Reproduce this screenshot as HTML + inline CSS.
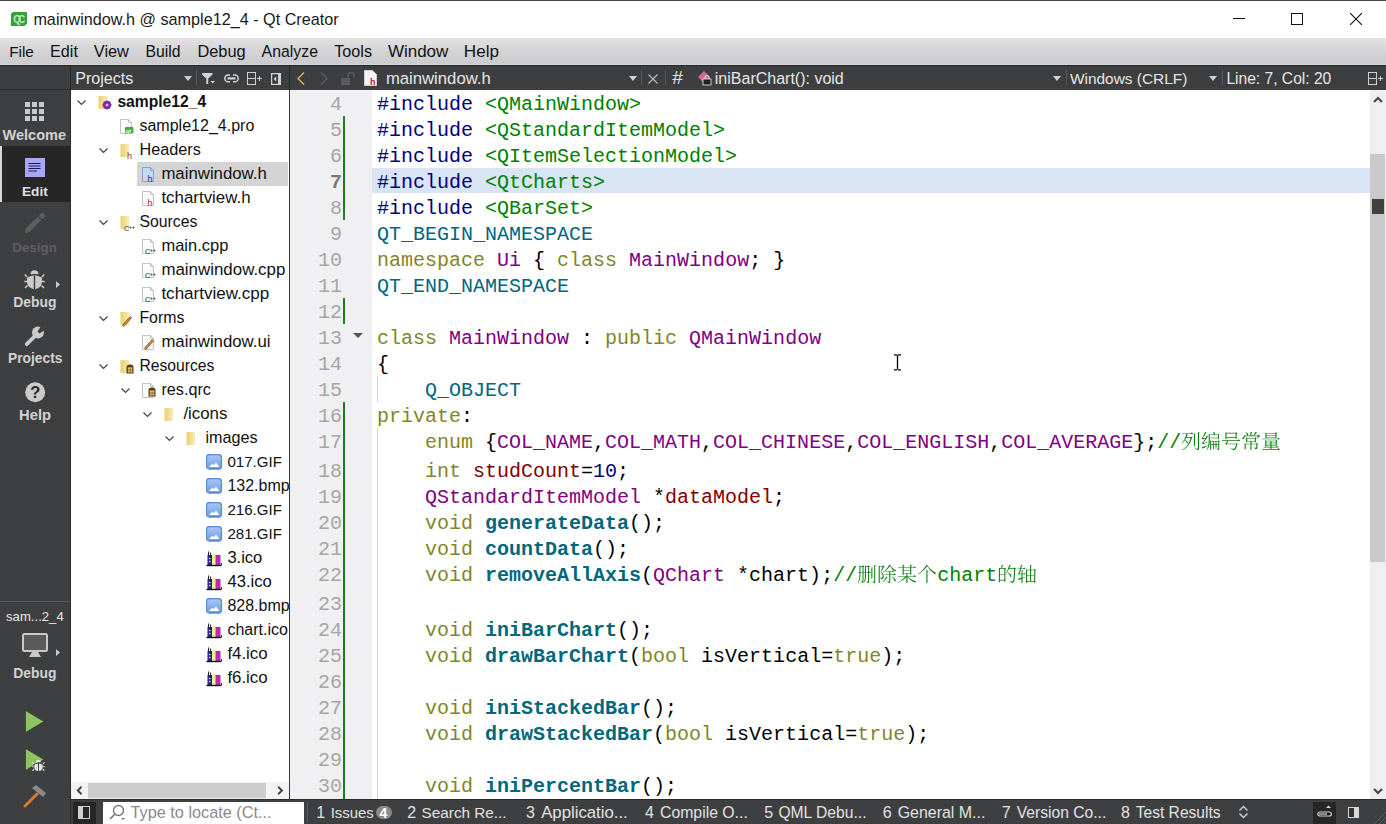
<!DOCTYPE html><html><head><meta charset='utf-8'><style>
*{margin:0;padding:0;box-sizing:border-box}
html,body{width:1386px;height:824px;overflow:hidden;background:#fff;font-family:"Liberation Sans", sans-serif;}
.a{position:absolute}
.t{position:absolute;white-space:pre;line-height:1}
.code{position:absolute;white-space:pre;font-family:"Liberation Mono", monospace;font-size:20px;line-height:26px;color:#000}
.kw{color:#84842a} .ty{color:#800080} .mac{color:#00677c} .pp{color:#000080} .str{color:#008000}
.fn{color:#00677c;font-weight:bold} .mem{color:#800000} .num{color:#000080} .cm{color:#008000}
.ln{position:absolute;font-family:"Liberation Mono", monospace;font-size:20px;line-height:26px;color:#9f9f9f;text-align:right;width:60px;left:280px}
</style></head><body>
<div class='a' style='left:0;top:0;width:1386px;height:1px;background:#474747'></div>
<div class='a' style='left:0;top:1px;width:1386px;height:37px;background:#fff'></div>
<svg class='a' style='left:11px;top:12px' width='17' height='14' viewBox='0 0 17 14'>
<path d='M2 0H16V11.5L13.5 14H0V2Z' fill='#35a03e'/>
<text x='8.2' y='11.3' font-family='Liberation Sans' font-size='10' font-weight='bold' fill='#b8f0b0' text-anchor='middle' textLength='12'>QC</text></svg>
<div class='t' style='left:33.40px;top:11px;font-family:"Liberation Sans";font-size:16.2px;font-weight:400;color:#1a1a1a;'>mainwindow.h @ sample12_4 - Qt Creator</div>
<div class='a' style='left:1233px;top:18px;width:12px;height:1px;background:#111'></div>
<div class='a' style='left:1291px;top:13px;width:12px;height:12px;border:1px solid #111'></div>
<svg class='a' style='left:1350px;top:13px' width='12' height='12' viewBox='0 0 12 12'><path d='M0 0L12 12M12 0L0 12' stroke='#111' stroke-width='1.1'/></svg>
<div class='a' style='left:0;top:38px;width:1386px;height:27px;background:linear-gradient(#e2e2e3,#d3d3d5 50%,#cbcbcd)'></div>
<div class='a' style='left:0;top:64px;width:1386px;height:1px;background:#d6d6d8'></div>
<div class='t' style='left:9.15px;top:44px;font-family:"Liberation Sans";font-size:15.3px;font-weight:400;color:#111;'>File</div>
<div class='t' style='left:50.10px;top:43px;font-family:"Liberation Sans";font-size:16.15px;font-weight:400;color:#111;'>Edit</div>
<div class='t' style='left:93.80px;top:43px;font-family:"Liberation Sans";font-size:16.35px;font-weight:400;color:#111;'>View</div>
<div class='t' style='left:145.40px;top:44px;font-family:"Liberation Sans";font-size:15.75px;font-weight:400;color:#111;'>Build</div>
<div class='t' style='left:197.40px;top:43px;font-family:"Liberation Sans";font-size:16.4px;font-weight:400;color:#111;'>Debug</div>
<div class='t' style='left:261.60px;top:44px;font-family:"Liberation Sans";font-size:15.85px;font-weight:400;color:#111;'>Analyze</div>
<div class='t' style='left:334.20px;top:43px;font-family:"Liberation Sans";font-size:16.2px;font-weight:400;color:#111;'>Tools</div>
<div class='t' style='left:387.90px;top:43px;font-family:"Liberation Sans";font-size:17.0px;font-weight:400;color:#111;'>Window</div>
<div class='t' style='left:463.80px;top:43px;font-family:"Liberation Sans";font-size:17.1px;font-weight:400;color:#111;'>Help</div>
<div class='a' style='left:0;top:65px;width:1386px;height:25px;background:#3d3e40'></div>
<div class='a' style='left:0;top:65px;width:1386px;height:1px;background:#26272a'></div>
<div class='a' style='left:0;top:89px;width:71px;height:1px;background:#2c2c2e'></div>
<div class='a' style='left:70px;top:65px;width:1px;height:25px;background:#2c2c2e'></div>
<div class='t' style='left:75.20px;top:70px;font-family:"Liberation Sans";font-size:16.1px;font-weight:400;color:#e6e6e6;'>Projects</div>
<svg class='a' style='left:184px;top:76px' width='8' height='5'><path d='M0 0H8L4 5Z' fill='#cfcfcf'/></svg>
<div class='a' style='left:196px;top:70px;width:1px;height:15px;background:#5a5a5a'></div>
<svg class='a' style='left:202px;top:73px' width='14' height='12' viewBox='0 0 14 12'>
<path d='M0 0H10.5V1.5L6.2 5.5V11L4.3 11V5.5L0 1.5Z' fill='#d4d4d4'/><path d='M8.5 8H13L10.75 10.5Z' fill='#d4d4d4'/></svg>
<svg class='a' style='left:224px;top:74px' width='15' height='9' viewBox='0 0 15 9'>
<path d='M6 1H4.2A3.3 3.3 0 0 0 4.2 7.8H6M9 1H10.8A3.3 3.3 0 0 1 10.8 7.8H9' fill='none' stroke='#d4d4d4' stroke-width='1.5'/>
<path d='M3.5 4.4H11.5' stroke='#d4d4d4' stroke-width='2.2'/></svg>
<svg class='a' style='left:247px;top:72px' width='16' height='14' viewBox='0 0 16 14'>
<rect x='0.5' y='0.5' width='8' height='12' fill='none' stroke='#d0d0d0'/><path d='M0.5 6.5H8.5' stroke='#d0d0d0'/>
<path d='M10 6.5H15M12.5 4V9' stroke='#d0d0d0'/></svg>
<svg class='a' style='left:271px;top:73px' width='10' height='12' viewBox='0 0 10 12'>
<rect x='0.6' y='0.6' width='8' height='10.8' fill='none' stroke='#d4d4d4' stroke-width='1.2'/><rect x='7' y='0' width='3' height='12' fill='#d4d4d4'/><path d='M5.2 3.5V8.5L2.7 6Z' fill='#d4d4d4'/></svg>
<div class='a' style='left:289px;top:65px;width:1px;height:25px;background:#262626'></div>
<svg class='a' style='left:297px;top:72px' width='8' height='13' viewBox='0 0 8 13'><path d='M7 0.5L1 6.5L7 12.5' fill='none' stroke='#d7b94a' stroke-width='1.4'/></svg>
<svg class='a' style='left:320px;top:72px' width='8' height='13' viewBox='0 0 8 13'><path d='M1 0.5L7 6.5L1 12.5' fill='none' stroke='#5e5e5e' stroke-width='1.4'/></svg>
<svg class='a' style='left:341px;top:72px' width='14' height='13' viewBox='0 0 14 13'>
<rect x='0' y='6' width='9' height='7' fill='#5a5a5a'/><path d='M7 6V3.5A3 3 0 0 1 13 3.5V5' fill='none' stroke='#5a5a5a' stroke-width='1.5'/></svg>
<svg class='a' style='left:364px;top:70px' width='13' height='16' viewBox='0 0 13 16'>
<path d='M0.5 0.5H8.5L12.5 4.5V15.5H0.5Z' fill='#f4f4f4' stroke='#cfcfcf'/>
<text x='6' y='15' font-family='Liberation Sans' font-size='9' font-weight='bold' fill='#c0203a'>h</text></svg>
<div class='t' style='left:385.90px;top:71px;font-family:"Liberation Sans";font-size:16.7px;font-weight:400;color:#e6e6e6;'>mainwindow.h</div>
<svg class='a' style='left:629px;top:76px' width='8' height='5'><path d='M0 0H8L4 5Z' fill='#cfcfcf'/></svg>
<div class='a' style='left:641px;top:70px;width:1px;height:15px;background:#5a5a5a'></div>
<svg class='a' style='left:648px;top:74px' width='10' height='10' viewBox='0 0 10 10'><path d='M0.5 0.5L9.5 9.5M9.5 0.5L0.5 9.5' stroke='#bdbdbd' stroke-width='1.1'/></svg>
<div class='a' style='left:665px;top:70px;width:1px;height:15px;background:#5a5a5a'></div>
<div class='t' style='left:672.20px;top:68px;font-family:"Liberation Sans";font-size:19.2px;font-weight:400;color:#e6e6e6;'>#</div>
<svg class='a' style='left:697px;top:70px' width='16' height='16' viewBox='0 0 16 16'>
<path d='M7 1L13 7L7 13L1 7Z' fill='#d06a90'/><rect x='6' y='9' width='8' height='6' fill='#222' stroke='#eee' stroke-width='0.8'/>
<path d='M8 9V7.5A2 2 0 0 1 12 7.5V9' fill='none' stroke='#eee' stroke-width='1'/></svg>
<div class='t' style='left:714.80px;top:71px;font-family:"Liberation Sans";font-size:16.0px;font-weight:400;color:#e6e6e6;'>iniBarChart(): void</div>
<svg class='a' style='left:1053px;top:76px' width='8' height='5'><path d='M0 0H8L4 5Z' fill='#cfcfcf'/></svg>
<div class='a' style='left:1066px;top:70px;width:1px;height:15px;background:#5a5a5a'></div>
<div class='t' style='left:1069.90px;top:71px;font-family:"Liberation Sans";font-size:15.45px;font-weight:400;color:#e6e6e6;'>Windows (CRLF)</div>
<svg class='a' style='left:1209px;top:76px' width='8' height='5'><path d='M0 0H8L4 5Z' fill='#cfcfcf'/></svg>
<div class='a' style='left:1222px;top:70px;width:1px;height:15px;background:#5a5a5a'></div>
<div class='t' style='left:1226.40px;top:71px;font-family:"Liberation Sans";font-size:15.6px;font-weight:400;color:#e6e6e6;'>Line: 7, Col: 20</div>
<svg class='a' style='left:1368px;top:72px' width='16' height='14' viewBox='0 0 16 14'>
<rect x='0.5' y='0.5' width='8' height='12' fill='none' stroke='#d0d0d0'/><path d='M0.5 6.5H8.5' stroke='#d0d0d0'/>
<path d='M10 6.5H15M12.5 4V9' stroke='#d0d0d0'/></svg>
<div class='a' style='left:0;top:90px;width:71px;height:734px;background:#3e3f41'></div>
<div class='a' style='left:70px;top:90px;width:1px;height:734px;background:#2a2a2c'></div>
<svg class='a' style='left:25px;top:102px' width='20' height='20' viewBox='0 0 20 20'><rect x='0' y='0' width='5' height='5' fill='#c9c9c9'/><rect x='7' y='0' width='5' height='5' fill='#c9c9c9'/><rect x='14' y='0' width='5' height='5' fill='#c9c9c9'/><rect x='0' y='7' width='5' height='5' fill='#c9c9c9'/><rect x='7' y='7' width='5' height='5' fill='#c9c9c9'/><rect x='14' y='7' width='5' height='5' fill='#c9c9c9'/><rect x='0' y='14' width='5' height='5' fill='#c9c9c9'/><rect x='7' y='14' width='5' height='5' fill='#c9c9c9'/><rect x='14' y='14' width='5' height='5' fill='#c9c9c9'/></svg>
<div class='t' style='left:2.60px;top:128px;font-family:"Liberation Sans";font-size:14.5px;font-weight:700;color:#d2d2d2;'>Welcome</div>
<div class='a' style='left:0;top:146px;width:70px;height:56px;background:#262626'></div>
<div class='a' style='left:0;top:146px;width:2px;height:56px;background:#d8d8d8'></div>
<svg class='a' style='left:25px;top:158px' width='20' height='19' viewBox='0 0 20 19'>
<rect x='0' y='0' width='20' height='19' fill='#a8a8f0'/><path d='M3.5 5.5H15.5M3.5 8H15.5M3.5 10.5H15.5M3.5 13H12' stroke='#1a1a60' stroke-width='1.1'/></svg>
<div class='t' style='left:22.00px;top:185px;font-family:"Liberation Sans";font-size:13.65px;font-weight:700;color:#e0e0e0;'>Edit</div>
<svg class='a' style='left:24px;top:213px' width='21' height='21' viewBox='0 0 21 21'>
<g transform='translate(10.5,10.5) rotate(-45)'><path d='M-14 0L-9.5 -2.4H7V2.4H-9.5Z' fill='#5e5e5e'/><rect x='8.3' y='-2.4' width='5.2' height='4.8' fill='#5e5e5e'/></g></svg>
<div class='t' style='left:12.20px;top:241px;font-family:"Liberation Sans";font-size:13.45px;font-weight:700;color:#5e5e5e;'>Design</div>
<svg class='a' style='left:24px;top:269px' width='21' height='21' viewBox='0 0 21 21'>
<path d='M6.5 5.2A4 4 0 0 1 14.5 5.2Z' fill='#cacaca'/>
<path d='M3 8.5Q10.5 4 18 8.5V13A7.5 7.2 0 0 1 3 13Z' fill='#cacaca'/>
<path d='M10.5 6.5V20.5' stroke='#3e3f41' stroke-width='1.4'/><path d='M2.5 8L10.5 5.3L18.5 8' fill='none' stroke='#3e3f41' stroke-width='1'/>
<path d='M0.8 5.5L3 8M0.3 12.5H3M1 19L3.5 16.5M20.2 5.5L18 8M20.7 12.5H18M20 19L17.5 16.5' stroke='#cacaca' stroke-width='1.5'/></svg>
<svg class='a' style='left:56px;top:281px' width='4' height='7'><path d='M0 0L4 3.5L0 7Z' fill='#cacaca'/></svg>
<div class='t' style='left:13.20px;top:296px;font-family:"Liberation Sans";font-size:13.9px;font-weight:700;color:#d2d2d2;'>Debug</div>
<svg class='a' style='left:24px;top:325px' width='21' height='22' viewBox='0 0 21 22'>
<path d='M2.8 19.2L11 11' stroke='#cacaca' stroke-width='3.8' stroke-linecap='round'/>
<circle cx='14' cy='7.5' r='6' fill='#cacaca'/><path d='M13.5 6.5L17.5 0.5L21.5 4.5L15.5 8.5Z' fill='#3e3f41'/></svg>
<div class='t' style='left:8.10px;top:352px;font-family:"Liberation Sans";font-size:13.75px;font-weight:700;color:#d2d2d2;'>Projects</div>
<svg class='a' style='left:25px;top:382px' width='21' height='21' viewBox='0 0 21 21'>
<circle cx='10.2' cy='10.2' r='10' fill='#cacaca'/>
<text x='10.2' y='16.2' font-family='Liberation Sans' font-size='16.5' font-weight='bold' fill='#2a2a2a' text-anchor='middle'>?</text></svg>
<div class='t' style='left:19.10px;top:408px;font-family:"Liberation Sans";font-size:14.75px;font-weight:700;color:#d2d2d2;'>Help</div>
<div class='a' style='left:0;top:601px;width:70px;height:1px;background:#5a5a5a'></div>
<div class='t' style='left:6.00px;top:610px;font-family:"Liberation Sans";font-size:13.15px;font-weight:400;color:#e8e8e8;'>sam...2_4</div>
<svg class='a' style='left:22px;top:633px' width='26' height='25' viewBox='0 0 26 25'>
<rect x='1' y='1' width='24' height='17' rx='1.5' fill='#5a5a5a' stroke='#c8c8c8' stroke-width='2'/>
<path d='M10 19H16L19 24H7Z' fill='#c8c8c8'/></svg>
<svg class='a' style='left:56px;top:649px' width='4' height='7'><path d='M0 0L4 3.5L0 7Z' fill='#cacaca'/></svg>
<div class='t' style='left:13.20px;top:667px;font-family:"Liberation Sans";font-size:13.9px;font-weight:700;color:#d2d2d2;'>Debug</div>
<svg class='a' style='left:25px;top:710px' width='20' height='23' viewBox='0 0 20 23'>
<path d='M0.5 0.5L19 11.5L0.5 22.5Z' fill='#8fc263' stroke='#2e4a20' stroke-width='0.8'/></svg>
<svg class='a' style='left:25px;top:748px' width='21' height='23' viewBox='0 0 21 23'>
<path d='M0.5 0.5L19 11.5L0.5 22.5Z' fill='#8fc263' stroke='#2e4a20' stroke-width='0.8'/>
<g transform='translate(7,11) scale(0.62)'><path d='M6.5 5.2A4 4 0 0 1 14.5 5.2Z' fill='#e4e4e4'/><path d='M3 8.5Q10.5 4 18 8.5V13A7.5 7.2 0 0 1 3 13Z' fill='#e4e4e4' stroke='#3e3f41' stroke-width='1.5'/><path d='M10.5 6.5V20.5' stroke='#3e3f41' stroke-width='1.6'/><path d='M0.8 5.5L3 8M0.3 12.5H3M1 19L3.5 16.5M20.2 5.5L18 8M20.7 12.5H18M20 19L17.5 16.5' stroke='#e4e4e4' stroke-width='2'/></g></svg>
<svg class='a' style='left:23px;top:785px' width='24' height='23' viewBox='0 0 24 23'>
<path d='M2 21L14 9' stroke='#d47c2c' stroke-width='3' stroke-linecap='round'/>
<path d='M9 3L13 0L23 8L20 12Z' fill='#8a8a8a'/></svg>
<div class='a' style='left:71px;top:90px;width:218px;height:709px;background:#fff'></div>
<svg width='0' height='0' style='position:absolute'><defs><linearGradient id='fg' x1='0' x2='1'><stop offset='0' stop-color='#ead071'/><stop offset='1' stop-color='#f8ebbb'/></linearGradient><linearGradient id='ig' x1='0' y1='0' x2='0' y2='1'><stop offset='0' stop-color='#a9c7f4'/><stop offset='1' stop-color='#6e9de6'/></linearGradient></defs></svg>
<div class='a' style='left:137px;top:162px;width:151px;height:24px;background:#d4d4d4'></div>
<div class='a' style='left:71px;top:90px;width:218px;height:692px;overflow:hidden'>
<svg class='a' style='left:6px;top:10px' width='9' height='6'><path d='M0.5 0.5L4.5 4.5L8.5 0.5' fill='none' stroke='#444' stroke-width='1.2'/></svg>
<svg class='a' style='left:27px;top:6px' width='16' height='16' viewBox='0 0 16 16'><rect x='0.5' y='0' width='8.5' height='13' fill='url(#fg)'/><circle cx='9' cy='9' r='3.2' fill='none' stroke='#7a2aa8' stroke-width='2'/><path d='M9 4.5V13.5M4.5 9H13.5M5.8 5.8L12.2 12.2M12.2 5.8L5.8 12.2' stroke='#7a2aa8' stroke-width='1.3'/><circle cx='9' cy='9' r='1.3' fill='#e0c0f0'/></svg>
<div class='t' style='left:46.40px;top:4px;font-family:"Liberation Sans";font-size:15.65px;font-weight:700;color:#111;'>sample12_4</div>
<svg class='a' style='left:49px;top:29px' width='14' height='16' viewBox='0 0 14 16'><path d='M0.5 0.5H8.5L11.5 3.5V14.5H0.5Z' fill='#fcfcfc' stroke='#c2c2c2'/><path d='M8.5 0.5V3.5H11.5' fill='none' stroke='#c2c2c2'/><rect x='5' y='8' width='8.5' height='6.5' rx='1' fill='#45a849'/><text x='5.6' y='13.6' font-family='Liberation Sans' font-weight='bold' font-size='6' fill='#e8ffe0'>qt</text></svg>
<div class='t' style='left:68.40px;top:27px;font-family:"Liberation Sans";font-size:16.05px;font-weight:400;color:#111;'>sample12_4.pro</div>
<svg class='a' style='left:28px;top:58px' width='9' height='6'><path d='M0.5 0.5L4.5 4.5L8.5 0.5' fill='none' stroke='#444' stroke-width='1.2'/></svg>
<svg class='a' style='left:49px;top:54px' width='16' height='16' viewBox='0 0 16 16'><rect x='0.5' y='0' width='8.5' height='13' fill='url(#fg)'/><text x='7' y='14.5' font-family='Liberation Sans' font-size='9' fill='#b01c3a'>h</text></svg>
<div class='t' style='left:68.40px;top:51px;font-family:"Liberation Sans";font-size:16.25px;font-weight:400;color:#111;'>Headers</div>
<svg class='a' style='left:71px;top:77px' width='14' height='16' viewBox='0 0 14 16'><path d='M0.5 0.5H8.5L11.5 3.5V14.5H0.5Z' fill='#c4d9f5' stroke='#7fa3d6'/><path d='M8.5 0.5V3.5H11.5' fill='none' stroke='#7fa3d6'/><text x='5.5' y='14.5' font-family='Liberation Sans' font-size='9' fill='#3a2a7a'>h</text></svg>
<div class='t' style='left:90.40px;top:76px;font-family:"Liberation Sans";font-size:16.8px;font-weight:400;color:#111;'>mainwindow.h</div>
<svg class='a' style='left:71px;top:101px' width='14' height='16' viewBox='0 0 14 16'><path d='M0.5 0.5H8.5L11.5 3.5V14.5H0.5Z' fill='#fcfcfc' stroke='#c2c2c2'/><path d='M8.5 0.5V3.5H11.5' fill='none' stroke='#c2c2c2'/><text x='5.5' y='14.5' font-family='Liberation Sans' font-size='9' fill='#b01c3a'>h</text></svg>
<div class='t' style='left:90.40px;top:100px;font-family:"Liberation Sans";font-size:16.9px;font-weight:400;color:#111;'>tchartview.h</div>
<svg class='a' style='left:28px;top:130px' width='9' height='6'><path d='M0.5 0.5L4.5 4.5L8.5 0.5' fill='none' stroke='#444' stroke-width='1.2'/></svg>
<svg class='a' style='left:49px;top:126px' width='16' height='16' viewBox='0 0 16 16'><rect x='0.5' y='0' width='8.5' height='13' fill='url(#fg)'/><text x='4' y='14.5' font-family='Liberation Sans' font-size='7.5' fill='#334'>C</text><text x='9' y='13' font-family='Liberation Sans' font-size='5' font-weight='bold' fill='#334'>++</text></svg>
<div class='t' style='left:68.40px;top:124px;font-family:"Liberation Sans";font-size:15.8px;font-weight:400;color:#111;'>Sources</div>
<svg class='a' style='left:71px;top:149px' width='14' height='16' viewBox='0 0 14 16'><path d='M0.5 0.5H8.5L11.5 3.5V14.5H0.5Z' fill='#fcfcfc' stroke='#c2c2c2'/><path d='M8.5 0.5V3.5H11.5' fill='none' stroke='#c2c2c2'/><text x='3' y='14.5' font-family='Liberation Sans' font-size='7.5' fill='#334'>C</text><text x='8' y='13' font-family='Liberation Sans' font-size='5' font-weight='bold' fill='#334'>++</text></svg>
<div class='t' style='left:90.40px;top:147px;font-family:"Liberation Sans";font-size:16.5px;font-weight:400;color:#111;'>main.cpp</div>
<svg class='a' style='left:71px;top:173px' width='14' height='16' viewBox='0 0 14 16'><path d='M0.5 0.5H8.5L11.5 3.5V14.5H0.5Z' fill='#fcfcfc' stroke='#c2c2c2'/><path d='M8.5 0.5V3.5H11.5' fill='none' stroke='#c2c2c2'/><text x='3' y='14.5' font-family='Liberation Sans' font-size='7.5' fill='#334'>C</text><text x='8' y='13' font-family='Liberation Sans' font-size='5' font-weight='bold' fill='#334'>++</text></svg>
<div class='t' style='left:90.40px;top:172px;font-family:"Liberation Sans";font-size:16.9px;font-weight:400;color:#111;'>mainwindow.cpp</div>
<svg class='a' style='left:71px;top:197px' width='14' height='16' viewBox='0 0 14 16'><path d='M0.5 0.5H8.5L11.5 3.5V14.5H0.5Z' fill='#fcfcfc' stroke='#c2c2c2'/><path d='M8.5 0.5V3.5H11.5' fill='none' stroke='#c2c2c2'/><text x='3' y='14.5' font-family='Liberation Sans' font-size='7.5' fill='#334'>C</text><text x='8' y='13' font-family='Liberation Sans' font-size='5' font-weight='bold' fill='#334'>++</text></svg>
<div class='t' style='left:90.40px;top:195px;font-family:"Liberation Sans";font-size:17.05px;font-weight:400;color:#111;'>tchartview.cpp</div>
<svg class='a' style='left:28px;top:226px' width='9' height='6'><path d='M0.5 0.5L4.5 4.5L8.5 0.5' fill='none' stroke='#444' stroke-width='1.2'/></svg>
<svg class='a' style='left:49px;top:222px' width='16' height='16' viewBox='0 0 16 16'><rect x='0.5' y='0' width='8.5' height='13' fill='url(#fg)'/><path d='M3 14L11 5' stroke='#6a3a10' stroke-width='2.6'/><path d='M3 14L11 5' stroke='#e0923a' stroke-width='1.3'/></svg>
<div class='t' style='left:68.40px;top:220px;font-family:"Liberation Sans";font-size:15.9px;font-weight:400;color:#111;'>Forms</div>
<svg class='a' style='left:71px;top:245px' width='14' height='16' viewBox='0 0 14 16'><path d='M0.5 0.5H8.5L11.5 3.5V14.5H0.5Z' fill='#fcfcfc' stroke='#c2c2c2'/><path d='M8.5 0.5V3.5H11.5' fill='none' stroke='#c2c2c2'/><path d='M3 14L11 5' stroke='#6a3a10' stroke-width='2.6'/><path d='M3 14L11 5' stroke='#e0923a' stroke-width='1.3'/></svg>
<div class='t' style='left:90.40px;top:244px;font-family:"Liberation Sans";font-size:16.8px;font-weight:400;color:#111;'>mainwindow.ui</div>
<svg class='a' style='left:28px;top:274px' width='9' height='6'><path d='M0.5 0.5L4.5 4.5L8.5 0.5' fill='none' stroke='#444' stroke-width='1.2'/></svg>
<svg class='a' style='left:49px;top:270px' width='16' height='16' viewBox='0 0 16 16'><rect x='0.5' y='0' width='8.5' height='13' fill='url(#fg)'/><path d='M6.5 7A3.5 2.5 0 0 1 13.5 7V13.5H6.5Z' fill='#5e3c08'/><rect x='7.8' y='7.3' width='2' height='2.4' fill='#e6c27a'/><rect x='10.3' y='7.3' width='2' height='2.4' fill='#e6c27a'/><rect x='7.8' y='10.3' width='2' height='2.2' fill='#e6c27a'/><rect x='10.3' y='10.3' width='2' height='2.2' fill='#e6c27a'/></svg>
<div class='t' style='left:68.40px;top:268px;font-family:"Liberation Sans";font-size:15.7px;font-weight:400;color:#111;'>Resources</div>
<svg class='a' style='left:50px;top:298px' width='9' height='6'><path d='M0.5 0.5L4.5 4.5L8.5 0.5' fill='none' stroke='#444' stroke-width='1.2'/></svg>
<svg class='a' style='left:71px;top:293px' width='14' height='16' viewBox='0 0 14 16'><path d='M0.5 0.5H8.5L11.5 3.5V14.5H0.5Z' fill='#fcfcfc' stroke='#c2c2c2'/><path d='M8.5 0.5V3.5H11.5' fill='none' stroke='#c2c2c2'/><path d='M6.5 7A3.5 2.5 0 0 1 13.5 7V13.5H6.5Z' fill='#5e3c08'/><rect x='7.8' y='7.3' width='2' height='2.4' fill='#e6c27a'/><rect x='10.3' y='7.3' width='2' height='2.4' fill='#e6c27a'/><rect x='7.8' y='10.3' width='2' height='2.2' fill='#e6c27a'/><rect x='10.3' y='10.3' width='2' height='2.2' fill='#e6c27a'/></svg>
<div class='t' style='left:90.40px;top:291px;font-family:"Liberation Sans";font-size:16.2px;font-weight:400;color:#111;'>res.qrc</div>
<svg class='a' style='left:72px;top:322px' width='9' height='6'><path d='M0.5 0.5L4.5 4.5L8.5 0.5' fill='none' stroke='#444' stroke-width='1.2'/></svg>
<svg class='a' style='left:93px;top:318px' width='16' height='16' viewBox='0 0 16 16'><rect x='0.5' y='0' width='8.5' height='13' fill='url(#fg)'/></svg>
<div class='t' style='left:112.40px;top:316px;font-family:"Liberation Sans";font-size:16.85px;font-weight:400;color:#111;'>/icons</div>
<svg class='a' style='left:94px;top:346px' width='9' height='6'><path d='M0.5 0.5L4.5 4.5L8.5 0.5' fill='none' stroke='#444' stroke-width='1.2'/></svg>
<svg class='a' style='left:115px;top:342px' width='16' height='16' viewBox='0 0 16 16'><rect x='0.5' y='0' width='8.5' height='13' fill='url(#fg)'/></svg>
<div class='t' style='left:134.40px;top:339px;font-family:"Liberation Sans";font-size:16.2px;font-weight:400;color:#111;'>images</div>
<svg class='a' style='left:135px;top:364px' width='17' height='16' viewBox='0 0 17 16'><rect x='0.5' y='0.5' width='15' height='14.5' rx='3' fill='url(#ig)' stroke='#5a8ad8' stroke-width='1.3'/><path d='M3 13L6 10L8 11L10 8.5L13.5 13Z' fill='#fff'/></svg>
<div class='t' style='left:156.40px;top:364px;font-family:"Liberation Sans";font-size:15.1px;font-weight:400;color:#111;'>017.GIF</div>
<svg class='a' style='left:135px;top:388px' width='17' height='16' viewBox='0 0 17 16'><rect x='0.5' y='0.5' width='15' height='14.5' rx='3' fill='url(#ig)' stroke='#5a8ad8' stroke-width='1.3'/><path d='M3 13L6 10L8 11L10 8.5L13.5 13Z' fill='#fff'/></svg>
<div class='t' style='left:156.40px;top:388px;font-family:"Liberation Sans";font-size:16.0px;font-weight:400;color:#111;'>132.bmp</div>
<svg class='a' style='left:135px;top:412px' width='17' height='16' viewBox='0 0 17 16'><rect x='0.5' y='0.5' width='15' height='14.5' rx='3' fill='url(#ig)' stroke='#5a8ad8' stroke-width='1.3'/><path d='M3 13L6 10L8 11L10 8.5L13.5 13Z' fill='#fff'/></svg>
<div class='t' style='left:156.40px;top:412px;font-family:"Liberation Sans";font-size:15.1px;font-weight:400;color:#111;'>216.GIF</div>
<svg class='a' style='left:135px;top:436px' width='17' height='16' viewBox='0 0 17 16'><rect x='0.5' y='0.5' width='15' height='14.5' rx='3' fill='url(#ig)' stroke='#5a8ad8' stroke-width='1.3'/><path d='M3 13L6 10L8 11L10 8.5L13.5 13Z' fill='#fff'/></svg>
<div class='t' style='left:156.40px;top:436px;font-family:"Liberation Sans";font-size:15.1px;font-weight:400;color:#111;'>281.GIF</div>
<svg class='a' style='left:135px;top:461px' width='17' height='16' viewBox='0 0 17 16'><rect x='1.5' y='4' width='4.5' height='10' fill='#22228a'/><rect x='6' y='3' width='3.5' height='11' fill='#f4eca0'/><rect x='9.5' y='4' width='5' height='10' fill='#b62ab0'/><path d='M0.5 14.5H15.5' stroke='#111' stroke-width='1.4'/><path d='M2.5 0.5V4M4.5 1.5V4M15.5 12V14' stroke='#111' stroke-width='0.9'/><circle cx='3.7' cy='7.5' r='0.8' fill='#fff'/><circle cx='3.7' cy='10.5' r='0.8' fill='#fff'/></svg>
<div class='t' style='left:156.40px;top:460px;font-family:"Liberation Sans";font-size:16.55px;font-weight:400;color:#111;'>3.ico</div>
<svg class='a' style='left:135px;top:485px' width='17' height='16' viewBox='0 0 17 16'><rect x='1.5' y='4' width='4.5' height='10' fill='#22228a'/><rect x='6' y='3' width='3.5' height='11' fill='#f4eca0'/><rect x='9.5' y='4' width='5' height='10' fill='#b62ab0'/><path d='M0.5 14.5H15.5' stroke='#111' stroke-width='1.4'/><path d='M2.5 0.5V4M4.5 1.5V4M15.5 12V14' stroke='#111' stroke-width='0.9'/><circle cx='3.7' cy='7.5' r='0.8' fill='#fff'/><circle cx='3.7' cy='10.5' r='0.8' fill='#fff'/></svg>
<div class='t' style='left:156.40px;top:484px;font-family:"Liberation Sans";font-size:16.65px;font-weight:400;color:#111;'>43.ico</div>
<svg class='a' style='left:135px;top:508px' width='17' height='16' viewBox='0 0 17 16'><rect x='0.5' y='0.5' width='15' height='14.5' rx='3' fill='url(#ig)' stroke='#5a8ad8' stroke-width='1.3'/><path d='M3 13L6 10L8 11L10 8.5L13.5 13Z' fill='#fff'/></svg>
<div class='t' style='left:156.40px;top:508px;font-family:"Liberation Sans";font-size:16.0px;font-weight:400;color:#111;'>828.bmp</div>
<svg class='a' style='left:135px;top:533px' width='17' height='16' viewBox='0 0 17 16'><rect x='1.5' y='4' width='4.5' height='10' fill='#22228a'/><rect x='6' y='3' width='3.5' height='11' fill='#f4eca0'/><rect x='9.5' y='4' width='5' height='10' fill='#b62ab0'/><path d='M0.5 14.5H15.5' stroke='#111' stroke-width='1.4'/><path d='M2.5 0.5V4M4.5 1.5V4M15.5 12V14' stroke='#111' stroke-width='0.9'/><circle cx='3.7' cy='7.5' r='0.8' fill='#fff'/><circle cx='3.7' cy='10.5' r='0.8' fill='#fff'/></svg>
<div class='t' style='left:156.40px;top:532px;font-family:"Liberation Sans";font-size:16.0px;font-weight:400;color:#111;'>chart.ico</div>
<svg class='a' style='left:135px;top:557px' width='17' height='16' viewBox='0 0 17 16'><rect x='1.5' y='4' width='4.5' height='10' fill='#22228a'/><rect x='6' y='3' width='3.5' height='11' fill='#f4eca0'/><rect x='9.5' y='4' width='5' height='10' fill='#b62ab0'/><path d='M0.5 14.5H15.5' stroke='#111' stroke-width='1.4'/><path d='M2.5 0.5V4M4.5 1.5V4M15.5 12V14' stroke='#111' stroke-width='0.9'/><circle cx='3.7' cy='7.5' r='0.8' fill='#fff'/><circle cx='3.7' cy='10.5' r='0.8' fill='#fff'/></svg>
<div class='t' style='left:156.40px;top:556px;font-family:"Liberation Sans";font-size:16.85px;font-weight:400;color:#111;'>f4.ico</div>
<svg class='a' style='left:135px;top:581px' width='17' height='16' viewBox='0 0 17 16'><rect x='1.5' y='4' width='4.5' height='10' fill='#22228a'/><rect x='6' y='3' width='3.5' height='11' fill='#f4eca0'/><rect x='9.5' y='4' width='5' height='10' fill='#b62ab0'/><path d='M0.5 14.5H15.5' stroke='#111' stroke-width='1.4'/><path d='M2.5 0.5V4M4.5 1.5V4M15.5 12V14' stroke='#111' stroke-width='0.9'/><circle cx='3.7' cy='7.5' r='0.8' fill='#fff'/><circle cx='3.7' cy='10.5' r='0.8' fill='#fff'/></svg>
<div class='t' style='left:156.40px;top:580px;font-family:"Liberation Sans";font-size:16.85px;font-weight:400;color:#111;'>f6.ico</div>
</div>
<div class='a' style='left:71px;top:782px;width:218px;height:17px;background:#f3f3f3'></div>
<div class='a' style='left:88px;top:783px;width:178px;height:15px;background:#cdcdcd'></div>
<svg class='a' style='left:76px;top:786px' width='7' height='9'><path d='M5.5 0.8L1.8 4.5L5.5 8.2' fill='none' stroke='#444' stroke-width='2'/></svg>
<svg class='a' style='left:277px;top:786px' width='7' height='9'><path d='M1.2 0.8L4.9 4.5L1.2 8.2' fill='none' stroke='#444' stroke-width='2'/></svg>
<div class='a' style='left:289px;top:90px;width:1px;height:710px;background:#3a3a3a'></div>
<div class='a' style='left:290px;top:90px;width:1096px;height:710px;background:#fff'></div>
<div class='a' style='left:290px;top:90px;width:82px;height:710px;background:#f0eff1'></div>
<div class='a' style='left:372px;top:168px;width:998px;height:25px;background:#d9e5f5'></div>
<div class='a' style='left:290px;top:90px;width:1080px;height:710px;overflow:hidden'>
<div class='code' style='left:87px;top:2px;height:26px'><span class='pp'>#include</span> <span class='str'>&lt;QMainWindow&gt;</span></div>
<div class='ln' style='left:0px;top:2px;width:52px;font-weight:normal;color:#a6a6a6'>4</div>
<div class='code' style='left:87px;top:28px;height:26px'><span class='pp'>#include</span> <span class='str'>&lt;QStandardItemModel&gt;</span></div>
<div class='ln' style='left:0px;top:28px;width:52px;font-weight:normal;color:#a6a6a6'>5</div>
<div class='code' style='left:87px;top:54px;height:26px'><span class='pp'>#include</span> <span class='str'>&lt;QItemSelectionModel&gt;</span></div>
<div class='ln' style='left:0px;top:54px;width:52px;font-weight:normal;color:#a6a6a6'>6</div>
<div class='code' style='left:87px;top:80px;height:26px'><span class='pp'>#include</span> <span class='str'>&lt;QtCharts&gt;</span></div>
<div class='ln' style='left:0px;top:80px;width:52px;font-weight:bold;color:#7a7a7a'>7</div>
<div class='code' style='left:87px;top:106px;height:26px'><span class='pp'>#include</span> <span class='str'>&lt;QBarSet&gt;</span></div>
<div class='ln' style='left:0px;top:106px;width:52px;font-weight:normal;color:#a6a6a6'>8</div>
<div class='code' style='left:87px;top:132px;height:26px'><span class='mac'>QT_BEGIN_NAMESPACE</span></div>
<div class='ln' style='left:0px;top:132px;width:52px;font-weight:normal;color:#a6a6a6'>9</div>
<div class='code' style='left:87px;top:158px;height:26px'><span class='kw'>namespace</span> <span class='ty'>Ui</span> { <span class='kw'>class</span> <span class='ty'>MainWindow</span>; }</div>
<div class='ln' style='left:0px;top:158px;width:52px;font-weight:normal;color:#a6a6a6'>10</div>
<div class='code' style='left:87px;top:184px;height:26px'><span class='mac'>QT_END_NAMESPACE</span></div>
<div class='ln' style='left:0px;top:184px;width:52px;font-weight:normal;color:#a6a6a6'>11</div>
<div class='code' style='left:87px;top:210px;height:26px'></div>
<div class='ln' style='left:0px;top:210px;width:52px;font-weight:normal;color:#a6a6a6'>12</div>
<div class='code' style='left:87px;top:236px;height:26px'><span class='kw'>class</span> <span class='ty'>MainWindow</span> : <span class='kw'>public</span> <span class='ty'>QMainWindow</span></div>
<div class='ln' style='left:0px;top:236px;width:52px;font-weight:normal;color:#a6a6a6'>13</div>
<div class='code' style='left:87px;top:262px;height:26px'>{</div>
<div class='ln' style='left:0px;top:262px;width:52px;font-weight:normal;color:#a6a6a6'>14</div>
<div class='code' style='left:87px;top:288px;height:26px'>    <span class='mac'>Q_OBJECT</span></div>
<div class='ln' style='left:0px;top:288px;width:52px;font-weight:normal;color:#a6a6a6'>15</div>
<div class='code' style='left:87px;top:314px;height:26px'><span class='kw'>private</span>:</div>
<div class='ln' style='left:0px;top:314px;width:52px;font-weight:normal;color:#a6a6a6'>16</div>
<div class='code' style='left:87px;top:340px;height:26px'>    <span class='kw'>enum</span> {<span class='ty'>COL_NAME</span>,<span class='ty'>COL_MATH</span>,<span class='ty'>COL_CHINESE</span>,<span class='ty'>COL_ENGLISH</span>,<span class='ty'>COL_AVERAGE</span>};<span class='cm'>//</span><span style='display:inline-block;width:100px;height:1px'></span></div>
<div class='ln' style='left:0px;top:340px;width:52px;font-weight:normal;color:#a6a6a6'>17</div>
<div class='code' style='left:87px;top:369px;height:26px'>    <span class='kw'>int</span> <span class='mem'>studCount</span>=<span class='num'>10</span>;</div>
<div class='ln' style='left:0px;top:369px;width:52px;font-weight:normal;color:#a6a6a6'>18</div>
<div class='code' style='left:87px;top:395px;height:26px'>    <span class='ty'>QStandardItemModel</span> *<span class='mem'>dataModel</span>;</div>
<div class='ln' style='left:0px;top:395px;width:52px;font-weight:normal;color:#a6a6a6'>19</div>
<div class='code' style='left:87px;top:421px;height:26px'>    <span class='kw'>void</span> <span class='fn'>generateData</span>();</div>
<div class='ln' style='left:0px;top:421px;width:52px;font-weight:normal;color:#a6a6a6'>20</div>
<div class='code' style='left:87px;top:447px;height:26px'>    <span class='kw'>void</span> <span class='fn'>countData</span>();</div>
<div class='ln' style='left:0px;top:447px;width:52px;font-weight:normal;color:#a6a6a6'>21</div>
<div class='code' style='left:87px;top:473px;height:26px'>    <span class='kw'>void</span> <span class='fn'>removeAllAxis</span>(<span class='ty'>QChart</span> *chart);<span class='cm'>//</span><span style='display:inline-block;width:80px;height:1px'></span><span class='cm'>chart</span><span style='display:inline-block;width:40px;height:1px'></span></div>
<div class='ln' style='left:0px;top:473px;width:52px;font-weight:normal;color:#a6a6a6'>22</div>
<div class='code' style='left:87px;top:502px;height:26px'></div>
<div class='ln' style='left:0px;top:502px;width:52px;font-weight:normal;color:#a6a6a6'>23</div>
<div class='code' style='left:87px;top:528px;height:26px'>    <span class='kw'>void</span> <span class='fn'>iniBarChart</span>();</div>
<div class='ln' style='left:0px;top:528px;width:52px;font-weight:normal;color:#a6a6a6'>24</div>
<div class='code' style='left:87px;top:554px;height:26px'>    <span class='kw'>void</span> <span class='fn'>drawBarChart</span>(<span class='kw'>bool</span> isVertical=<span class='kw'>true</span>);</div>
<div class='ln' style='left:0px;top:554px;width:52px;font-weight:normal;color:#a6a6a6'>25</div>
<div class='code' style='left:87px;top:580px;height:26px'></div>
<div class='ln' style='left:0px;top:580px;width:52px;font-weight:normal;color:#a6a6a6'>26</div>
<div class='code' style='left:87px;top:606px;height:26px'>    <span class='kw'>void</span> <span class='fn'>iniStackedBar</span>();</div>
<div class='ln' style='left:0px;top:606px;width:52px;font-weight:normal;color:#a6a6a6'>27</div>
<div class='code' style='left:87px;top:632px;height:26px'>    <span class='kw'>void</span> <span class='fn'>drawStackedBar</span>(<span class='kw'>bool</span> isVertical=<span class='kw'>true</span>);</div>
<div class='ln' style='left:0px;top:632px;width:52px;font-weight:normal;color:#a6a6a6'>28</div>
<div class='code' style='left:87px;top:658px;height:26px'></div>
<div class='ln' style='left:0px;top:658px;width:52px;font-weight:normal;color:#a6a6a6'>29</div>
<div class='code' style='left:87px;top:684px;height:26px'>    <span class='kw'>void</span> <span class='fn'>iniPercentBar</span>();</div>
<div class='ln' style='left:0px;top:684px;width:52px;font-weight:normal;color:#a6a6a6'>30</div>
</div>
<svg class='a' style='left:1181.13px;top:431.20px' width='20' height='20' viewBox='0 -880 1000 1000'><path transform='scale(1,-1)' fill='#0a7d0a' d='M50.48046875 755.43017578125H482.268310546875L525.497314453125 810.55859375Q525.497314453125 810.55859375 533.567138671875 804.0362548828125Q541.636962890625 797.513916015625 554.5391845703125 786.754150390625Q567.44140625 775.994384765625 581.39111328125 764.1396484375Q595.3408203125 752.284912109375 607.005615234375 741.6201171875Q603.005615234375 725.6201171875 580.720703125 725.6201171875H58.48046875ZM240.43017578125 561.525146484375H501.87158203125V531.715087890625H230.43017578125ZM266.97216796875 755.43017578125H338.703857421875Q315.798828125 659.81005859375 274.134033203125 567.5726318359375Q232.46923828125 475.335205078125 174.2821044921875 393.240234375Q116.094970703125 311.145263671875 43.385498046875 246.715087890625L31.8603515625 259.240234375Q90.005615234375 326.43017578125 137.5084228515625 408.81005859375Q185.01123046875 491.18994140625 218.5140380859375 580.2374267578125Q252.016845703125 669.284912109375 266.97216796875 755.43017578125ZM182.05029296875 431Q235.32958984375 413.32958984375 269.1368408203125 391.51953125Q302.944091796875 369.70947265625 320.6591796875 348.1871337890625Q338.374267578125 326.664794921875 342.7821044921875 307.9525146484375Q347.18994140625 289.240234375 342.1229248046875 276.8128662109375Q337.055908203125 264.385498046875 325.346435546875 261.17041015625Q313.636962890625 257.955322265625 298.117431640625 267.474853515625Q290.067138671875 292.759765625 269.4442138671875 321.259765625Q248.8212890625 349.759765625 222.6983642578125 376.6173095703125Q196.575439453125 403.474853515625 171.43017578125 421.474853515625ZM644.536376953125 749.564208984375 729.22900390625 739.994384765625Q727.323974609375 730.08935546875 720.3714599609375 723.58935546875Q713.4189453125 717.08935546875 697.22900390625 714.08935546875V148.083740234375Q697.22900390625 143.98876953125 690.7318115234375 139.0614013671875Q684.234619140625 134.134033203125 674.7625732421875 130.34912109375Q665.29052734375 126.564208984375 654.865966796875 126.564208984375H644.536376953125ZM845.49169921875 811.754150390625 935.513916015625 801.184326171875Q933.60888671875 791.08935546875 925.1563720703125 783.58935546875Q916.703857421875 776.08935546875 898.60888671875 773.994384765625V13.413330078125Q898.60888671875 -10.055908203125 892.5390625 -28.6229248046875Q886.46923828125 -47.18994140625 865.7122802734375 -58.9971923828125Q844.955322265625 -70.804443359375 800.44140625 -75.994384765625Q797.536376953125 -62.81005859375 792.4888916015625 -52.3380126953125Q787.44140625 -41.865966796875 776.156494140625 -34.916259765625Q764.0615234375 -26.966552734375 741.7989501953125 -21.8017578125Q719.536376953125 -16.636962890625 683.87158203125 -12.35205078125V4.26806640625Q683.87158203125 4.26806640625 701.37158203125 2.8155517578125Q718.87158203125 1.363037109375 743.37158203125 -0.136962890625Q767.87158203125 -1.636962890625 789.4190673828125 -3.0894775390625Q810.966552734375 -4.5419921875 819.966552734375 -4.5419921875Q834.681640625 -4.5419921875 840.086669921875 0.863037109375Q845.49169921875 6.26806640625 845.49169921875 18.88818359375ZM485.877197265625 561.525146484375H475.59228515625L512.296142578125 599.323974609375L579.184326171875 537.29052734375Q573.279296875 531.005615234375 564.7318115234375 528.3631591796875Q556.184326171875 525.720703125 538.994384765625 523.720703125Q513.994384765625 430.3408203125 475.494384765625 341.745849609375Q436.994384765625 253.15087890625 381.114501953125 175.1983642578125Q325.234619140625 97.245849609375 247.8323974609375 32.9832763671875Q170.43017578125 -31.279296875 66.815673828125 -77.804443359375L56.195556640625 -62.374267578125Q177.055908203125 2.1005859375 262.606201171875 98.48046875Q348.156494140625 194.8603515625 402.896728515625 313.145263671875Q457.636962890625 431.43017578125 485.877197265625 561.525146484375Z'/></svg>
<svg class='a' style='left:1201.13px;top:431.20px' width='20' height='20' viewBox='0 -880 1000 1000'><path transform='scale(1,-1)' fill='#0a7d0a' d='M506.742919921875 -53.3798828125Q506.742919921875 -56.664794921875 495.0557861328125 -64.234619140625Q483.36865234375 -71.804443359375 465.08935546875 -71.804443359375H457.044677734375V413.0390625V414.0390625L518.837890625 386.234619140625H506.742919921875ZM590.67041015625 844.94970703125Q630.614501953125 830.184326171875 654.0865478515625 811.8267822265625Q677.55859375 793.46923828125 688.2960205078125 775.0418701171875Q699.033447265625 756.614501953125 699.36865234375 741.4022216796875Q699.703857421875 726.18994140625 692.46923828125 716.715087890625Q685.234619140625 707.240234375 674.1201171875 705.8826904296875Q663.005615234375 704.525146484375 649.5810546875 714.664794921875Q645.865966796875 745.1396484375 623.720703125 780.1396484375Q601.575439453125 815.1396484375 579.145263671875 837.234619140625ZM386.05029296875 714.759765625V734.754150390625L448.02783203125 704.759765625H437.26806640625V457.318359375Q437.26806640625 394.033447265625 433.078125 323.6787109375Q428.88818359375 253.323974609375 413.6759033203125 182.3267822265625Q398.463623046875 111.32958984375 366.5390625 44.4273681640625Q334.614501953125 -22.474853515625 279.955322265625 -78.854736328125L264.525146484375 -67.234619140625Q318.525146484375 9.094970703125 344.3826904296875 95.51953125Q370.240234375 181.944091796875 378.145263671875 273.98876953125Q386.05029296875 366.033447265625 386.05029296875 456.318359375V704.759765625ZM852.53076171875 386.234619140625 879.6201171875 419.323974609375 950.0390625 366.759765625Q940.134033203125 354.664794921875 911.703857421875 349.759765625V-0.865966796875Q911.703857421875 -22.385498046875 907.323974609375 -37.93017578125Q902.944091796875 -53.474853515625 888.20947265625 -62.544677734375Q873.474853515625 -71.614501953125 842.91064453125 -74.804443359375Q841.91064453125 -65.284912109375 838.9581298828125 -55.3826904296875Q836.005615234375 -45.48046875 829.005615234375 -40.815673828125Q822.91064453125 -35.245849609375 811.41064453125 -30.865966796875Q799.91064453125 -26.486083984375 779.53076171875 -24.201171875V-7.5810546875Q779.53076171875 -7.5810546875 793.4832763671875 -8.5335693359375Q807.435791015625 -9.486083984375 823.4832763671875 -10.9385986328125Q839.53076171875 -12.39111328125 845.625732421875 -12.39111328125Q855.53076171875 -12.39111328125 858.53076171875 -8.3436279296875Q861.53076171875 -4.296142578125 861.53076171875 4.60888671875V386.234619140625ZM772.6591796875 22.8994140625Q772.6591796875 19.804443359375 762.494384765625 13.1619873046875Q752.32958984375 6.51953125 734.18994140625 6.51953125H727.6201171875V384.3798828125H772.6591796875ZM640.74853515625 -13.81005859375Q640.653564453125 -16.905029296875 630.48876953125 -23.5474853515625Q620.323974609375 -30.18994140625 602.279296875 -30.18994140625H595.614501953125V384.3798828125H640.74853515625ZM837.726318359375 704.759765625 867.195556640625 735.323974609375 930.944091796875 686Q926.944091796875 681.094970703125 917.5865478515625 676.5474853515625Q908.22900390625 672 897.134033203125 670.905029296875V482.424560546875Q897.134033203125 479.424560546875 889.58935546875 475.1396484375Q882.044677734375 470.854736328125 872.1676025390625 467.6173095703125Q862.29052734375 464.3798828125 853.245849609375 464.3798828125H845.8212890625V704.759765625ZM903.005615234375 212.804443359375V182.994384765625H477.78759765625V212.804443359375ZM900.575439453125 386.234619140625V356.424560546875H483.502685546875V386.234619140625ZM882.8603515625 543.525146484375V513.715087890625H416.413330078125V543.525146484375ZM887.385498046875 704.759765625V674.94970703125H416.413330078125V704.759765625ZM369.798828125 606.9609375Q364.798828125 597.9609375 350.2513427734375 593.555908203125Q335.703857421875 589.15087890625 312.513916015625 599.15087890625L338.98876953125 606.9609375Q319.703857421875 571.15087890625 290.1815185546875 526.935791015625Q260.6591796875 482.720703125 225.5418701171875 435.7430419921875Q190.424560546875 388.765380859375 152.854736328125 344.9776611328125Q115.284912109375 301.18994140625 79 266.1396484375L77.094970703125 277.32958984375H114.564208984375Q110.564208984375 248.8603515625 101.08935546875 230.935791015625Q91.614501953125 213.01123046875 79.56982421875 208.536376953125L41.48046875 287.994384765625Q41.48046875 287.994384765625 51.955322265625 290.6368408203125Q62.43017578125 293.279296875 66.715087890625 297.46923828125Q96.335205078125 328.51953125 128.955322265625 373.1871337890625Q161.575439453125 417.854736328125 192.29052734375 468.8072509765625Q223.005615234375 519.759765625 247.720703125 567.44970703125Q272.435791015625 615.1396484375 286.9609375 651.32958984375ZM284.9384765625 790.335205078125Q280.9384765625 781.240234375 266.4384765625 775.740234375Q251.9384765625 770.240234375 228.653564453125 779.955322265625L255.223388671875 787.955322265625Q236.463623046875 748.575439453125 205.013916015625 698.575439453125Q173.564208984375 648.575439453125 137.614501953125 599.5028076171875Q101.664794921875 550.43017578125 66.18994140625 513.284912109375L64.3798828125 525.284912109375H100.134033203125Q96.22900390625 495.005615234375 84.944091796875 477.5335693359375Q73.6591796875 460.0615234375 60.70947265625 455.586669921875L29.8603515625 535.854736328125Q29.8603515625 535.854736328125 38.7877197265625 538.4971923828125Q47.715087890625 541.1396484375 52 544.424560546875Q72.6201171875 567.854736328125 95.145263671875 604.2122802734375Q117.67041015625 640.56982421875 138.29052734375 681.664794921875Q158.91064453125 722.759765625 175.03076171875 762.044677734375Q191.15087890625 801.32958984375 200.676025390625 829.614501953125ZM42.335205078125 68.893798828125Q70.335205078125 75.703857421875 117.025146484375 88.013916015625Q163.715087890625 100.323974609375 219.9525146484375 117.5865478515625Q276.18994140625 134.84912109375 334.284912109375 153.6591796875L339 139.22900390625Q297.044677734375 115.184326171875 238.70947265625 83.8798828125Q180.374267578125 52.575439453125 103.564208984375 17.8212890625Q99.279296875 -0.653564453125 83.70947265625 -7.55859375ZM60.335205078125 284.804443359375Q85.43017578125 286.70947265625 129.215087890625 291.9720458984375Q173 297.234619140625 227.4273681640625 304.9022216796875Q281.854736328125 312.56982421875 339.234619140625 320.3798828125L342.044677734375 304.854736328125Q315.424560546875 296.18994140625 274.6619873046875 282.7877197265625Q233.8994140625 269.385498046875 184.3994140625 254.245849609375Q134.8994140625 239.106201171875 83.424560546875 224.776611328125ZM50.43017578125 531.56982421875Q71.6201171875 530.56982421875 106.2374267578125 530.56982421875Q140.854736328125 530.56982421875 183.1619873046875 531.974853515625Q225.46923828125 533.3798828125 268.4189453125 534.3798828125L269.323974609375 517.854736328125Q241.22900390625 509.905029296875 185.8966064453125 496.695556640625Q130.564208984375 483.486083984375 73.32958984375 471.586669921875Z'/></svg>
<svg class='a' style='left:1221.13px;top:431.20px' width='20' height='20' viewBox='0 -880 1000 1000'><path transform='scale(1,-1)' fill='#0a7d0a' d='M363.64794921875 406Q355.4580078125 382.18994140625 340.9105224609375 347.284912109375Q326.363037109375 312.3798828125 311.3155517578125 277.974853515625Q296.26806640625 243.56982421875 284.363037109375 219.759765625H294.078125L263.083740234375 189.720703125L201.486083984375 244.905029296875Q212.676025390625 251.56982421875 230.5084228515625 257.5921630859375Q248.3408203125 263.614501953125 261.91064453125 264.8994140625L234.01123046875 232.51953125Q246.01123046875 254.424560546875 259.9637451171875 287.1871337890625Q273.916259765625 319.94970703125 286.8212890625 352.664794921875Q299.726318359375 385.3798828125 305.63134765625 406ZM746.586669921875 248.664794921875 780.48046875 283.798828125 847.083740234375 227.240234375Q836.98876953125 215.05029296875 806.083740234375 213.765380859375Q798.703857421875 154.005615234375 783.1563720703125 101.005615234375Q767.60888671875 48.005615234375 747.4189453125 9.2430419921875Q727.22900390625 -29.51953125 704.46923828125 -46.614501953125Q683.70947265625 -59.8994140625 655.44970703125 -67.8994140625Q627.18994140625 -75.8994140625 593.815673828125 -75.804443359375Q593.91064453125 -63.284912109375 589.815673828125 -53.3603515625Q585.720703125 -43.435791015625 574.15087890625 -36.5810546875Q561.676025390625 -29.536376953125 528.5335693359375 -22.4190673828125Q495.39111328125 -15.3017578125 461.44140625 -10.921875L462.44140625 7.223388671875Q488.106201171875 5.223388671875 522.89111328125 1.818359375Q557.676025390625 -1.586669921875 588.7235107421875 -3.5391845703125Q619.77099609375 -5.49169921875 631.77099609375 -5.49169921875Q647.486083984375 -5.49169921875 656.4385986328125 -3.5391845703125Q665.39111328125 -1.586669921875 675.106201171875 4.318359375Q691.8212890625 16.033447265625 707.44140625 51.7261962890625Q723.0615234375 87.4189453125 736.3240966796875 138.9217529296875Q749.586669921875 190.424560546875 757.49169921875 248.664794921875ZM791.77099609375 248.664794921875V218.854736328125H259.8994140625L270.8994140625 248.664794921875ZM873.1005859375 470.74853515625Q873.1005859375 470.74853515625 881.1229248046875 464.3211669921875Q889.145263671875 457.893798828125 901.8575439453125 447.6815185546875Q914.56982421875 437.46923828125 928.82958984375 425.304443359375Q943.08935546875 413.1396484375 954.6591796875 401.664794921875Q951.564208984375 385.664794921875 928.374267578125 385.664794921875H58.815673828125L49.91064453125 415.474853515625H828.44140625ZM718.877197265625 787 752.01123046875 823.513916015625 826.184326171875 766.05029296875Q821.279296875 760.05029296875 809.5167236328125 754.955322265625Q797.754150390625 749.8603515625 782.6591796875 746.8603515625V502.759765625Q782.564208984375 499.759765625 774.734619140625 495.4273681640625Q766.905029296875 491.094970703125 756.5531005859375 487.81005859375Q746.201171875 484.525146484375 736.681640625 484.525146484375H728.877197265625V787ZM274.312744140625 488.1396484375Q274.312744140625 485.759765625 267.578125 481.094970703125Q260.843505859375 476.43017578125 250.84912109375 472.9078369140625Q240.854736328125 469.385498046875 228.955322265625 469.385498046875H220.720703125V787V815.134033203125L279.59765625 787H764.48046875V757.18994140625H274.312744140625ZM761.385498046875 561.284912109375V531.474853515625H251.513916015625V561.284912109375Z'/></svg>
<svg class='a' style='left:1241.13px;top:431.20px' width='20' height='20' viewBox='0 -880 1000 1000'><path transform='scale(1,-1)' fill='#0a7d0a' d='M285.3798828125 378.424560546875H716.01123046875V349.51953125H285.3798828125ZM257.676025390625 534.759765625V562.60888671875L315.793212890625 534.759765625H713.776611328125V504.94970703125H310.6982421875V319.0390625Q310.6982421875 316.6591796875 304.0111083984375 312.5418701171875Q297.323974609375 308.424560546875 287.01953125 305.4022216796875Q276.715087890625 302.3798828125 265.815673828125 302.3798828125H257.676025390625ZM691.016845703125 534.759765625H681.921875L712.15087890625 568.083740234375L782.0390625 514.905029296875Q778.0390625 509.905029296875 767.72900390625 504.81005859375Q757.4189453125 499.715087890625 744.323974609375 497.6201171875V330.6591796875Q744.323974609375 327.6591796875 736.0418701171875 322.9217529296875Q727.759765625 318.184326171875 717.5028076171875 314.4468994140625Q707.245849609375 310.70947265625 697.916259765625 310.70947265625H691.016845703125ZM181.106201171875 244.8994140625V273.843505859375L240.603271484375 244.8994140625H798.486083984375V215.994384765625H235.12841796875V-14.094970703125Q235.12841796875 -16.474853515625 228.4412841796875 -20.5921630859375Q221.754150390625 -24.70947265625 211.44970703125 -27.779296875Q201.145263671875 -30.84912109375 189.3408203125 -30.84912109375H181.106201171875ZM164.575439453125 652.56982421875H897.106201171875V623.664794921875H164.575439453125ZM159.145263671875 697.134033203125 176.575439453125 697.22900390625Q189.3798828125 643.374267578125 183.6871337890625 601.51953125Q177.994384765625 559.664794921875 162.3519287109375 532.0474853515625Q146.70947265625 504.43017578125 128.664794921875 490.525146484375Q111.335205078125 477.335205078125 91.0531005859375 474.4022216796875Q70.77099609375 471.46923828125 61.676025390625 486.55859375Q54.5810546875 499.742919921875 61.220703125 512.8350830078125Q67.8603515625 525.92724609375 81.3798828125 535.1171875Q111.81005859375 554.357421875 136.0726318359375 599.1954345703125Q160.335205078125 644.033447265625 159.145263671875 697.134033203125ZM858.497314453125 652.56982421875H847.497314453125L886.201171875 692.1787109375L956.279296875 623.765380859375Q951.08935546875 618.575439453125 941.7318115234375 616.98046875Q932.374267578125 615.385498046875 918.184326171875 614.385498046875Q900.759765625 590.05029296875 870.1927490234375 560.094970703125Q839.625732421875 530.1396484375 815.201171875 510.08935546875L801.055908203125 518.70947265625Q811.296142578125 536.70947265625 822.44140625 561.424560546875Q833.586669921875 586.1396484375 843.2794189453125 610.9022216796875Q852.97216796875 635.664794921875 858.497314453125 652.56982421875ZM472.0615234375 833.279296875 562.1787109375 823.804443359375Q561.1787109375 813.8994140625 552.463623046875 806.494384765625Q543.74853515625 799.08935546875 525.653564453125 796.994384765625V642.284912109375H472.0615234375ZM226.9609375 822.804443359375Q273.715087890625 806.944091796875 301.9971923828125 786.4915771484375Q330.279296875 766.0390625 343.9217529296875 745.064208984375Q357.564208984375 724.08935546875 359.3519287109375 705.924560546875Q361.1396484375 687.759765625 354.31005859375 675.8323974609375Q347.48046875 663.905029296875 334.9609375 661.5474853515625Q322.44140625 659.18994140625 307.016845703125 670.424560546875Q304.206787109375 695.614501953125 290.3240966796875 722.2569580078125Q276.44140625 748.8994140625 256.201171875 773.4468994140625Q235.9609375 797.994384765625 215.435791015625 814.184326171875ZM717.447021484375 825.70947265625 804.36865234375 786.715087890625Q800.36865234375 779.525146484375 790.0111083984375 774.93017578125Q779.653564453125 770.335205078125 765.36865234375 773.145263671875Q739.513916015625 742.6201171875 701.9468994140625 705.4525146484375Q664.3798828125 668.284912109375 627.05029296875 637.759765625H604.474853515625Q623.43017578125 663.94970703125 644.195556640625 696.6871337890625Q664.9609375 729.424560546875 684.226318359375 763.114501953125Q703.49169921875 796.804443359375 717.447021484375 825.70947265625ZM766.681640625 244.8994140625H756.681640625L785.91064453125 280.318359375L863.513916015625 224.044677734375Q859.513916015625 218.94970703125 847.298828125 212.9022216796875Q835.083740234375 206.854736328125 820.798828125 204.759765625V53.60888671875Q820.798828125 31.51953125 814.823974609375 13.7374267578125Q808.84912109375 -4.044677734375 788.01953125 -14.804443359375Q767.18994140625 -25.564208984375 723.435791015625 -29.754150390625Q721.53076171875 -17.664794921875 716.720703125 -7.3826904296875Q711.91064453125 2.8994140625 701.195556640625 9.754150390625Q690.575439453125 16.513916015625 669.43017578125 22.48876953125Q648.284912109375 28.463623046875 613.854736328125 31.74853515625V47.36865234375Q613.854736328125 47.36865234375 630.094970703125 46.4161376953125Q646.335205078125 45.463623046875 669.3380126953125 44.0111083984375Q692.3408203125 42.55859375 713.486083984375 41.6060791015625Q734.63134765625 40.653564453125 743.44140625 40.653564453125Q756.966552734375 40.653564453125 761.8240966796875 45.153564453125Q766.681640625 49.653564453125 766.681640625 59.463623046875ZM471.156494140625 367.614501953125H524.273681640625V-50.81005859375Q524.273681640625 -53 518.4664306640625 -58.6173095703125Q512.6591796875 -64.234619140625 502.544677734375 -68.7569580078125Q492.43017578125 -73.279296875 479.055908203125 -73.279296875H471.156494140625Z'/></svg>
<svg class='a' style='left:1261.13px;top:431.20px' width='20' height='20' viewBox='0 -880 1000 1000'><path transform='scale(1,-1)' fill='#0a7d0a' d='M245.60888671875 685.284912109375H755.435791015625V655.474853515625H245.60888671875ZM245.60888671875 584.81005859375H755.435791015625V555.905029296875H245.60888671875ZM721.636962890625 782.56982421875H711.636962890625L744.676025390625 818.98876953125L818.754150390625 761.715087890625Q813.84912109375 756.6201171875 801.634033203125 751.025146484375Q789.4189453125 745.43017578125 775.22900390625 742.43017578125V536.994384765625Q775.22900390625 533.994384765625 767.3994140625 529.2569580078125Q759.56982421875 524.51953125 749.2178955078125 520.7821044921875Q738.865966796875 517.044677734375 729.44140625 517.044677734375H721.636962890625ZM218.435791015625 782.56982421875V810.60888671875L277.02783203125 782.56982421875H766.726318359375V753.664794921875H271.742919921875V530.70947265625Q271.742919921875 528.32958984375 265.00830078125 524.164794921875Q258.273681640625 520 247.9217529296875 516.525146484375Q237.56982421875 513.05029296875 226.67041015625 513.05029296875H218.435791015625ZM237.1396484375 294.335205078125H767.385498046875V264.525146484375H237.1396484375ZM237.1396484375 189.05029296875H767.385498046875V160.145263671875H237.1396484375ZM736.7822265625 396.81005859375H726.687255859375L759.106201171875 433.513916015625L833.564208984375 375.8603515625Q829.564208984375 369.765380859375 817.2066650390625 364.575439453125Q804.84912109375 359.385498046875 790.564208984375 356.29052734375V150.3798828125Q790.46923828125 147.3798828125 782.1396484375 142.6424560546875Q773.81005859375 137.905029296875 763.4581298828125 134.1676025390625Q753.106201171875 130.43017578125 744.586669921875 130.43017578125H736.7822265625ZM209.865966796875 396.81005859375V424.944091796875L268.742919921875 396.81005859375H778.44140625V367H263.4580078125V132.664794921875Q263.4580078125 130.284912109375 256.6759033203125 125.6676025390625Q249.893798828125 121.05029296875 239.494384765625 117.98046875Q229.094970703125 114.91064453125 218.1005859375 114.91064453125H209.865966796875ZM52.525146484375 491.6201171875H823.396728515625L866.77099609375 543.22900390625Q866.77099609375 543.22900390625 874.6983642578125 536.8966064453125Q882.625732421875 530.564208984375 894.8380126953125 520.994384765625Q907.05029296875 511.424560546875 920.7625732421875 499.854736328125Q934.474853515625 488.284912109375 946.044677734375 477.81005859375Q942.94970703125 461.81005859375 919.854736328125 461.81005859375H61.43017578125ZM53.195556640625 -24.184326171875H822.681640625L866.53076171875 31.70947265625Q866.53076171875 31.70947265625 875.005615234375 25.32958984375Q883.48046875 18.94970703125 896.2877197265625 8.3798828125Q909.094970703125 -2.18994140625 923.4022216796875 -14.354736328125Q937.70947265625 -26.51953125 950.279296875 -37.08935546875Q947.184326171875 -53.08935546875 923.994384765625 -53.08935546875H62.1005859375ZM128.385498046875 86.385498046875H770.067138671875L811.01123046875 134.754150390625Q811.01123046875 134.754150390625 818.5335693359375 128.8267822265625Q826.055908203125 122.8994140625 837.41064453125 113.734619140625Q848.765380859375 104.56982421875 861.6676025390625 93.81005859375Q874.56982421875 83.05029296875 885.234619140625 72.575439453125Q881.234619140625 56.575439453125 859.94970703125 56.575439453125H137.29052734375ZM471.156494140625 396.81005859375H524.273681640625V-35.70947265625H471.156494140625Z'/></svg>
<svg class='a' style='left:857.08px;top:564.20px' width='20' height='20' viewBox='0 -880 1000 1000'><path transform='scale(1,-1)' fill='#0a7d0a' d='M948.323974609375 822.08935546875Q946.4189453125 811.994384765625 937.9189453125 804.9468994140625Q929.4189453125 797.8994140625 911.323974609375 795.8994140625V7.1787109375Q911.323974609375 -15.720703125 905.8966064453125 -33.455322265625Q900.46923828125 -51.18994140625 882.1396484375 -62.3072509765625Q863.81005859375 -73.424560546875 824.15087890625 -77.614501953125Q823.055908203125 -65.81005859375 818.555908203125 -55.2178955078125Q814.055908203125 -44.625732421875 803.9609375 -37.865966796875Q793.9609375 -30.201171875 775.15087890625 -25.226318359375Q756.3408203125 -20.25146484375 726.77099609375 -16.0615234375V0.653564453125Q726.77099609375 0.653564453125 741.2235107421875 -0.346435546875Q755.676025390625 -1.346435546875 775.6285400390625 -3.25146484375Q795.5810546875 -5.156494140625 813.1285400390625 -6.156494140625Q830.676025390625 -7.156494140625 837.676025390625 -7.156494140625Q851.39111328125 -7.156494140625 855.89111328125 -2.7039794921875Q860.39111328125 1.74853515625 860.39111328125 12.55859375V832.564208984375ZM804.51953125 694.1787109375Q802.614501953125 684.1787109375 794.6619873046875 677.1312255859375Q786.70947265625 670.083740234375 767.614501953125 667.98876953125V160.94970703125Q767.614501953125 156.854736328125 761.8072509765625 152.06982421875Q756 147.284912109375 746.8603515625 143.594970703125Q737.720703125 139.905029296875 727.5810546875 139.905029296875H717.536376953125V704.55859375ZM265.586669921875 776.3798828125 294.5810546875 812.46923828125 369.6201171875 754.905029296875Q356.905029296875 741.81005859375 324.905029296875 735.81005859375V37.664794921875Q324.905029296875 16.240234375 319.6676025390625 -0.1619873046875Q314.43017578125 -16.564208984375 298.0279541015625 -26.944091796875Q281.625732421875 -37.323974609375 245.8212890625 -41.4189453125Q244.8212890625 -30.184326171875 240.916259765625 -20.82958984375Q237.01123046875 -11.474853515625 229.106201171875 -5.094970703125Q220.201171875 1.3798828125 204.5335693359375 5.759765625Q188.865966796875 10.1396484375 163.055908203125 12.32958984375V29.1396484375Q163.055908203125 29.1396484375 174.77099609375 28.1396484375Q186.486083984375 27.1396484375 203.0587158203125 25.734619140625Q219.63134765625 24.32958984375 234.2989501953125 23.32958984375Q248.966552734375 22.32958984375 254.966552734375 22.32958984375Q266.87158203125 22.32958984375 271.2291259765625 27.2821044921875Q275.586669921875 32.234619140625 275.586669921875 43.044677734375V776.3798828125ZM544.3017578125 776.3798828125 573.201171875 812.374267578125 648.145263671875 755Q643.145263671875 749.905029296875 631.240234375 744.3575439453125Q619.335205078125 738.81005859375 603.335205078125 735.81005859375V4.843505859375Q603.335205078125 -17.39111328125 598.145263671875 -33.6983642578125Q592.955322265625 -50.005615234375 576.7430419921875 -59.4329833984375Q560.53076171875 -68.8603515625 525.106201171875 -72.955322265625Q524.106201171875 -62.720703125 520.7486572265625 -53.4134521484375Q517.39111328125 -44.106201171875 509.5810546875 -38.63134765625Q499.9609375 -32.156494140625 484.935791015625 -27.37158203125Q469.91064453125 -22.586669921875 444.48046875 -20.396728515625V-3.681640625Q444.48046875 -3.681640625 455.9581298828125 -4.6341552734375Q467.435791015625 -5.586669921875 483.7235107421875 -6.5391845703125Q500.01123046875 -7.49169921875 514.44140625 -8.4442138671875Q528.87158203125 -9.396728515625 534.776611328125 -9.396728515625Q554.3017578125 -9.396728515625 554.3017578125 10.223388671875V776.3798828125ZM123.156494140625 786.3798828125V805.8994140625L183.51953125 776.3798828125H172.854736328125V459.43017578125Q172.854736328125 395.240234375 169.854736328125 324.5028076171875Q166.854736328125 253.765380859375 155.56982421875 183.0279541015625Q144.284912109375 112.29052734375 119.0726318359375 45.6480712890625Q93.8603515625 -20.994384765625 50.3408203125 -77.184326171875L32.815673828125 -67.374267578125Q75.77099609375 8.005615234375 94.701171875 94.885498046875Q113.63134765625 181.765380859375 118.3939208984375 274.5977783203125Q123.156494140625 367.43017578125 123.156494140625 458.525146484375V776.3798828125ZM310.625732421875 776.3798828125V746.56982421875H144.765380859375V776.3798828125ZM401.536376953125 786.3798828125V805.8994140625L461.614501953125 776.3798828125H450.94970703125V367.843505859375Q450.94970703125 304.74853515625 447.544677734375 242.6312255859375Q444.1396484375 180.513916015625 431.1396484375 122.064208984375Q418.1396484375 63.614501953125 391.4022216796875 12.06982421875Q364.664794921875 -39.474853515625 317.905029296875 -80.70947265625L302.18994140625 -70.08935546875Q348.385498046875 -14.474853515625 369.3883056640625 54.4971923828125Q390.39111328125 123.46923828125 395.9637451171875 202.513916015625Q401.536376953125 281.55859375 401.536376953125 366.843505859375V776.3798828125ZM589.15087890625 776.3798828125V746.56982421875H424.145263671875V776.3798828125ZM642.91064453125 501.46923828125Q642.91064453125 501.46923828125 653.1005859375 492.0418701171875Q663.29052734375 482.614501953125 677.48046875 469.044677734375Q691.67041015625 455.474853515625 702.575439453125 442.18994140625Q699.575439453125 426.18994140625 678.575439453125 426.18994140625H50.29052734375L42.29052734375 456H610.3408203125Z'/></svg>
<svg class='a' style='left:877.08px;top:564.20px' width='20' height='20' viewBox='0 -880 1000 1000'><path transform='scale(1,-1)' fill='#0a7d0a' d='M434.323974609375 523.284912109375H749.5419921875L784.5810546875 567.893798828125Q784.5810546875 567.893798828125 796.435791015625 558.7764892578125Q808.29052734375 549.6591796875 823.9776611328125 536.3519287109375Q839.664794921875 523.044677734375 852.614501953125 509.474853515625Q848.614501953125 494.3798828125 828.234619140625 494.3798828125H441.4189453125ZM358.564208984375 358.424560546875H820.486083984375L862.765380859375 412.033447265625Q862.765380859375 412.033447265625 870.6927490234375 405.653564453125Q878.6201171875 399.273681640625 891.18994140625 388.798828125Q903.759765625 378.323974609375 917.3770751953125 366.7066650390625Q930.994384765625 355.08935546875 942.46923828125 344.614501953125Q938.46923828125 328.614501953125 916.279296875 328.614501953125H366.564208984375ZM611.1005859375 523.284912109375H663.742919921875V13.9384765625Q663.742919921875 -8.245849609375 658.2205810546875 -26.8128662109375Q652.6982421875 -45.3798828125 634.1312255859375 -57.6871337890625Q615.564208984375 -69.994384765625 576.43017578125 -74.994384765625Q575.43017578125 -62.905029296875 571.4776611328125 -51.67041015625Q567.525146484375 -40.435791015625 559.43017578125 -33.676025390625Q549.6201171875 -25.106201171875 531.405029296875 -20.4888916015625Q513.18994140625 -15.87158203125 482.905029296875 -11.681640625V4.033447265625Q482.905029296875 4.033447265625 496.6676025390625 3.033447265625Q510.43017578125 2.033447265625 529.1927490234375 0.62841796875Q547.955322265625 -0.776611328125 565.2178955078125 -1.776611328125Q582.48046875 -2.776611328125 589.48046875 -2.776611328125Q602.29052734375 -2.776611328125 606.695556640625 1.318359375Q611.1005859375 5.413330078125 611.1005859375 16.033447265625ZM750.664794921875 256.84912109375Q812.754150390625 220.083740234375 851.703857421875 183.6787109375Q890.653564453125 147.273681640625 911.5111083984375 115.2513427734375Q932.36865234375 83.22900390625 938.013916015625 58.46923828125Q943.6591796875 33.70947265625 938.32958984375 18.234619140625Q933 2.759765625 919.9329833984375 -0.5028076171875Q906.865966796875 -3.765380859375 890.25146484375 8.564208984375Q879.726318359375 45.134033203125 853.8184814453125 89.0865478515625Q827.91064453125 133.0390625 796.5977783203125 175.3966064453125Q765.284912109375 217.754150390625 738.044677734375 249.134033203125ZM84.385498046875 777.905029296875V807.564208984375L149.2177734375 777.905029296875H137.02783203125V-54.81005859375Q137.02783203125 -57.094970703125 131.26806640625 -62.164794921875Q125.50830078125 -67.234619140625 115.9412841796875 -71.20947265625Q106.374267578125 -75.184326171875 93.094970703125 -75.184326171875H84.385498046875ZM109.70947265625 777.905029296875H340.335205078125V749H109.70947265625ZM288.195556640625 777.905029296875H277.1005859375L316.1396484375 816.754150390625L388.02783203125 745.005615234375Q382.932861328125 738.91064453125 371.9803466796875 736.7681884765625Q361.02783203125 734.625732421875 343.932861328125 733.625732421875Q328.64794921875 702.720703125 304.8155517578125 658.1480712890625Q280.983154296875 613.575439453125 256.413330078125 569.0028076171875Q231.843505859375 524.43017578125 211.98876953125 494.335205078125Q260.1787109375 454.3798828125 287.74853515625 413.2374267578125Q315.318359375 372.094970703125 326.8406982421875 332.025146484375Q338.363037109375 291.955322265625 338.363037109375 254.48046875Q339.26806640625 185.1005859375 311.6982421875 151.365966796875Q284.12841796875 117.63134765625 217.0390625 113.916259765625Q217.0390625 129.3408203125 213.5390625 141.1201171875Q210.0390625 152.8994140625 204.944091796875 157.754150390625Q199.0390625 163.134033203125 185.4189453125 167.0614013671875Q171.798828125 170.98876953125 155.798828125 172.273681640625V187.893798828125Q172.134033203125 187.893798828125 194.279296875 187.893798828125Q216.424560546875 187.893798828125 225.94970703125 187.893798828125Q241.759765625 187.893798828125 252.3798828125 193.798828125Q279.43017578125 209.323974609375 279.43017578125 266.424560546875Q279.43017578125 319.1396484375 259.3798828125 375.9022216796875Q239.32958984375 432.664794921875 185.98876953125 491.335205078125Q197.513916015625 517.525146484375 211.3016357421875 554.6201171875Q225.08935546875 591.715087890625 239.32958984375 632.2625732421875Q253.56982421875 672.81005859375 266.2625732421875 710.8575439453125Q278.955322265625 748.905029296875 288.195556640625 777.905029296875ZM460.955322265625 257.083740234375 543.552978515625 222.759765625Q537.552978515625 207.854736328125 508.837890625 212.664794921875Q489.552978515625 173.56982421875 456.88818359375 131.974853515625Q424.223388671875 90.3798828125 382.9161376953125 52.8798828125Q341.60888671875 15.3798828125 294.84912109375 -13.240234375L285.134033203125 1.3798828125Q324.564208984375 34.94970703125 358.8519287109375 77.804443359375Q393.1396484375 120.6591796875 419.4273681640625 167.3714599609375Q445.715087890625 214.083740234375 460.955322265625 257.083740234375ZM647.843505859375 786.955322265625Q614.843505859375 725.385498046875 560.963623046875 665.2430419921875Q507.083740234375 605.1005859375 441.10888671875 553.7430419921875Q375.134033203125 502.385498046875 304.84912109375 467.48046875L296.134033203125 481.815673828125Q343.46923828125 511.67041015625 391.01953125 553.43017578125Q438.56982421875 595.18994140625 480.5726318359375 644.2122802734375Q522.575439453125 693.234619140625 553.625732421875 742.9720458984375Q584.676025390625 792.70947265625 598.916259765625 837.51953125L700.12841796875 816.240234375Q698.12841796875 808.145263671875 689.9859619140625 804.455322265625Q681.843505859375 800.765380859375 665.1787109375 798.765380859375Q696.893798828125 746.525146484375 744.6312255859375 701.6396484375Q792.36865234375 656.754150390625 851.083740234375 620.653564453125Q909.798828125 584.552978515625 973.08935546875 558.16748046875L971.279296875 544.262451171875Q953.6201171875 540.2177734375 940.385498046875 527.9161376953125Q927.15087890625 515.614501953125 922.15087890625 498.765380859375Q835.8603515625 548.48046875 761.4971923828125 622.4329833984375Q687.134033203125 696.385498046875 647.843505859375 786.955322265625Z'/></svg>
<svg class='a' style='left:897.08px;top:564.20px' width='20' height='20' viewBox='0 -880 1000 1000'><path transform='scale(1,-1)' fill='#0a7d0a' d='M50.91064453125 715.664794921875H824.44140625L868.91064453125 770.36865234375Q868.91064453125 770.36865234375 877.3380126953125 763.98876953125Q885.765380859375 757.60888671875 898.4776611328125 747.5390625Q911.18994140625 737.46923828125 925.4022216796875 725.3519287109375Q939.614501953125 713.234619140625 951.184326171875 701.854736328125Q947.184326171875 686.759765625 924.8994140625 686.759765625H59.815673828125ZM301.18994140625 570.18994140625H694.284912109375V541.284912109375H301.18994140625ZM301.18994140625 417.3798828125H694.284912109375V387.56982421875H301.18994140625ZM280.916259765625 836.804443359375 370.9384765625 827.234619140625Q369.033447265625 817.234619140625 361.1759033203125 809.82958984375Q353.318359375 802.424560546875 334.413330078125 800.32958984375V353.6201171875Q334.413330078125 350.43017578125 327.7261962890625 345.55029296875Q321.0390625 340.67041015625 311.1871337890625 336.8380126953125Q301.335205078125 333.005615234375 291.53076171875 333.005615234375H280.916259765625ZM658.726318359375 836.994384765625 749.318359375 827.32958984375Q747.413330078125 817.424560546875 739.5557861328125 810.01953125Q731.6982421875 802.614501953125 712.793212890625 800.51953125V359.56982421875Q712.793212890625 355.474853515625 706.463623046875 350.594970703125Q700.134033203125 345.715087890625 690.234619140625 342.3826904296875Q680.335205078125 339.05029296875 669.435791015625 339.05029296875H658.726318359375ZM42.48046875 271.18994140625H823.73193359375L870.486083984375 328.798828125Q870.486083984375 328.798828125 879.0084228515625 321.9664306640625Q887.53076171875 315.134033203125 901.29052734375 304.564208984375Q915.05029296875 293.994384765625 929.8575439453125 281.424560546875Q944.664794921875 268.854736328125 957.32958984375 257.3798828125Q955.32958984375 249.3798828125 948.6871337890625 245.3798828125Q942.044677734375 241.3798828125 931.044677734375 241.3798828125H51.385498046875ZM420.307373046875 271.18994140625H487.413330078125V255.18994140625Q414.6982421875 152.8603515625 298.8463134765625 74.17041015625Q182.994384765625 -4.51953125 39.005615234375 -54.044677734375L30.385498046875 -36.70947265625Q112.91064453125 -0.51953125 186.4134521484375 47.955322265625Q259.916259765625 96.43017578125 319.7291259765625 153.31005859375Q379.5419921875 210.18994140625 420.307373046875 271.18994140625ZM537.4189453125 271.18994140625Q582.0390625 210.424560546875 652.3966064453125 158.0865478515625Q722.754150390625 105.74853515625 805.6116943359375 67.3155517578125Q888.46923828125 28.882568359375 968.46923828125 9.022216796875L967.374267578125 -2.07275390625Q949 -4.0224609375 934.385498046875 -16.896728515625Q919.77099609375 -29.77099609375 914.201171875 -50.3798828125Q836.01123046875 -22.094970703125 761.5782470703125 23.3575439453125Q687.145263671875 68.81005859375 625.544677734375 128.9525146484375Q563.944091796875 189.094970703125 522.083740234375 260.759765625ZM470.536376953125 403.1396484375H524.603271484375V-56.6201171875Q524.603271484375 -58.81005859375 518.7010498046875 -63.4273681640625Q512.798828125 -68.044677734375 502.5418701171875 -72.01953125Q492.284912109375 -75.994384765625 478.625732421875 -75.994384765625H470.536376953125Z'/></svg>
<svg class='a' style='left:917.08px;top:564.20px' width='20' height='20' viewBox='0 -880 1000 1000'><path transform='scale(1,-1)' fill='#0a7d0a' d='M506.51953125 779.91064453125Q472.184326171875 724.435791015625 423.3267822265625 665.4134521484375Q374.46923828125 606.39111328125 314.1368408203125 549.4637451171875Q253.804443359375 492.536376953125 185.759765625 442.036376953125Q117.715087890625 391.536376953125 44.005615234375 352.296142578125L36.385498046875 368.536376953125Q103.29052734375 412.106201171875 168.4832763671875 468.365966796875Q233.676025390625 524.625732421875 291.3939208984375 587.0279541015625Q349.11181640625 649.43017578125 393.4246826171875 712.9273681640625Q437.737548828125 776.424560546875 462.977783203125 834.46923828125L562.6591796875 809.955322265625Q560.564208984375 801.575439453125 551.8267822265625 797.385498046875Q543.08935546875 793.195556640625 525.044677734375 791.005615234375Q573.759765625 720.67041015625 640.044677734375 654.0474853515625Q706.32958984375 587.424560546875 787.70947265625 530.6815185546875Q869.08935546875 473.9384765625 961.279296875 431.837890625L959.374267578125 417.742919921875Q940.43017578125 413.318359375 927.2430419921875 401.2318115234375Q914.055908203125 389.145263671875 908.486083984375 372.296142578125Q776.15087890625 450.681640625 671.8128662109375 555.5615234375Q567.474853515625 660.44140625 506.51953125 779.91064453125ZM560.413330078125 551.625732421875Q558.50830078125 541.625732421875 550.5557861328125 534.53076171875Q542.603271484375 527.435791015625 523.413330078125 525.3408203125V-57.525146484375Q523.413330078125 -61.715087890625 516.98876953125 -66.284912109375Q510.564208984375 -70.854736328125 500.4273681640625 -74.32958984375Q490.29052734375 -77.804443359375 479.201171875 -77.804443359375H468.396728515625V562.29052734375Z'/></svg>
<svg class='a' style='left:997.09px;top:564.20px' width='20' height='20' viewBox='0 -880 1000 1000'><path transform='scale(1,-1)' fill='#0a7d0a' d='M145.318359375 -26.1005859375Q145.318359375 -29.48046875 139.8211669921875 -34.145263671875Q134.323974609375 -38.81005859375 124.70947265625 -42.3323974609375Q115.094970703125 -45.854736328125 103.29052734375 -45.854736328125H93.15087890625V661.335205078125V690.994384765625L150.223388671875 661.335205078125H399.0615234375V631.525146484375H145.318359375ZM323.692626953125 813.955322265625Q317.59765625 793.48046875 287.02783203125 793.48046875Q276.363037109375 769.8603515625 262.3658447265625 742.05029296875Q248.36865234375 714.240234375 233.9664306640625 686.93017578125Q219.564208984375 659.6201171875 207.804443359375 638.715087890625H184.56982421875Q191.18994140625 663 200.025146484375 697.784912109375Q208.8603515625 732.56982421875 217.2430419921875 768.94970703125Q225.625732421875 805.32958984375 232.055908203125 835.51953125ZM843.826904296875 661.715087890625 879.005615234375 701.513916015625 952.0390625 640.575439453125Q946.0390625 634.48046875 936.444091796875 630.79052734375Q926.84912109375 627.1005859375 909.754150390625 625.91064453125Q906.754150390625 489.726318359375 901.84912109375 379.0838623046875Q896.944091796875 268.44140625 888.8966064453125 185.296142578125Q880.84912109375 102.15087890625 868.6591796875 48.6005859375Q856.46923828125 -4.94970703125 838.994384765625 -26.1396484375Q819.94970703125 -51.51953125 791.5 -62.7569580078125Q763.05029296875 -73.994384765625 729.676025390625 -73.994384765625Q729.676025390625 -60.715087890625 726.0335693359375 -48.8380126953125Q722.39111328125 -36.9609375 711.106201171875 -30.106201171875Q699.8212890625 -22.156494140625 671.416259765625 -14.586669921875Q643.01123046875 -7.016845703125 613.0615234375 -2.636962890625L614.0615234375 15.6982421875Q637.156494140625 13.6982421875 665.6090087890625 10.793212890625Q694.0615234375 7.88818359375 719.0140380859375 5.983154296875Q743.966552734375 4.078125 755.156494140625 4.078125Q770.87158203125 4.078125 778.466552734375 6.6256103515625Q786.0615234375 9.173095703125 793.966552734375 17.983154296875Q813.87158203125 37.6982421875 825.6341552734375 122.1787109375Q837.396728515625 206.6591796875 844.6593017578125 344.6871337890625Q851.921875 482.715087890625 854.921875 661.715087890625ZM356.966552734375 661.335205078125 390.005615234375 697.754150390625 463.22900390625 640.575439453125Q459.134033203125 634.48046875 446.8714599609375 629.4329833984375Q434.60888671875 624.385498046875 419.60888671875 621.29052734375V3.614501953125Q419.60888671875 0.51953125 411.96923828125 -4.4078369140625Q404.32958984375 -9.335205078125 394.1676025390625 -13.6676025390625Q384.005615234375 -18 374.486083984375 -18H366.966552734375V661.335205078125ZM547.720703125 455.094970703125Q605 427.1396484375 640.854736328125 396.6871337890625Q676.70947265625 366.234619140625 694.9720458984375 337.759765625Q713.234619140625 309.284912109375 717.2374267578125 286.1676025390625Q721.240234375 263.05029296875 714.7681884765625 248.2178955078125Q708.296142578125 233.385498046875 695.1341552734375 230.2178955078125Q681.97216796875 227.05029296875 665.45263671875 239.56982421875Q659.0224609375 273.759765625 638.257080078125 311.664794921875Q617.49169921875 349.56982421875 589.8687744140625 385.3798828125Q562.245849609375 421.18994140625 536.1005859375 447.3798828125ZM895.3408203125 661.715087890625V631.905029296875H572.6201171875L585.525146484375 661.715087890625ZM698.173095703125 807.955322265625Q695.173095703125 800.67041015625 686.5306396484375 794.265380859375Q677.88818359375 787.8603515625 660.88818359375 788.765380859375Q625.55859375 680.1005859375 572.823974609375 583.3128662109375Q520.08935546875 486.525146484375 456.3798828125 420.905029296875L441.759765625 431.525146484375Q475.81005859375 480.905029296875 507.0028076171875 545.0223388671875Q538.195556640625 609.1396484375 564.4832763671875 683.51953125Q590.77099609375 757.8994140625 608.106201171875 834.804443359375ZM406.77099609375 381.715087890625V351.905029296875H121.424560546875V381.715087890625ZM406.77099609375 87.18994140625V57.3798828125H121.424560546875V87.18994140625Z'/></svg>
<svg class='a' style='left:1017.09px;top:564.20px' width='20' height='20' viewBox='0 -880 1000 1000'><path transform='scale(1,-1)' fill='#0a7d0a' d='M852.681640625 595.94970703125 885.3408203125 631.98876953125 957.184326171875 575.284912109375Q953.08935546875 569.18994140625 940.8267822265625 564.1424560546875Q928.564208984375 559.094970703125 914.374267578125 556.905029296875V-48.474853515625Q914.374267578125 -51.56982421875 906.82958984375 -56.4971923828125Q899.284912109375 -61.424560546875 889.3128662109375 -65.70947265625Q879.3408203125 -69.994384765625 870.01123046875 -69.994384765625H862.681640625V595.94970703125ZM504.742919921875 -57.05029296875Q504.742919921875 -60.43017578125 499.293212890625 -65.0474853515625Q493.843505859375 -69.664794921875 484.323974609375 -73.5921630859375Q474.804443359375 -77.51953125 462.284912109375 -77.51953125H453.145263671875V595.94970703125V625.4189453125L509.837890625 595.94970703125H882.5810546875V566.1396484375H504.742919921875ZM882.53076171875 24.759765625V-5.05029296875H483.603271484375V24.759765625ZM882.53076171875 323.56982421875V293.759765625H483.603271484375V323.56982421875ZM737.9384765625 819.3798828125Q736.9384765625 809.3798828125 729.9384765625 802.8798828125Q722.9384765625 796.3798828125 705.9384765625 794.284912109375V6.1396484375H654.53076171875V828.94970703125ZM276.363037109375 -60.335205078125Q276.26806640625 -63.525146484375 264.2010498046875 -70.7374267578125Q252.134033203125 -77.94970703125 232 -77.94970703125H224.385498046875V384.335205078125H276.363037109375ZM311.4580078125 556.044677734375Q309.552978515625 546.044677734375 302.0054931640625 538.94970703125Q294.4580078125 531.854736328125 276.363037109375 529.854736328125V377.335205078125Q276.363037109375 377.335205078125 265.5809326171875 377.335205078125Q254.798828125 377.335205078125 240.279296875 377.335205078125H227.044677734375V566.424560546875ZM48.720703125 146.463623046875Q81.005615234375 153.1787109375 138.6229248046875 167.60888671875Q196.240234375 182.0390625 268.9525146484375 201.8267822265625Q341.664794921875 221.614501953125 418.424560546875 242.94970703125L422.234619140625 227.424560546875Q368.994384765625 203.664794921875 292.2318115234375 170.025146484375Q215.46923828125 136.385498046875 112.614501953125 96.486083984375Q110.424560546875 87.39111328125 104.734619140625 81.296142578125Q99.044677734375 75.201171875 92.759765625 72.296142578125ZM358.474853515625 443.664794921875Q358.474853515625 443.664794921875 370.7122802734375 433.974853515625Q382.94970703125 424.284912109375 399.32958984375 410.4525146484375Q415.70947265625 396.6201171875 428.994384765625 383.43017578125Q424.994384765625 367.43017578125 403.8994140625 367.43017578125H109.335205078125L101.335205078125 397.240234375H320.6201171875ZM354.48046875 704.134033203125Q354.48046875 704.134033203125 367.55029296875 694.254150390625Q380.6201171875 684.374267578125 398.474853515625 669.8519287109375Q416.32958984375 655.32958984375 429.994384765625 640.94970703125Q426.08935546875 624.94970703125 404.804443359375 624.94970703125H54.385498046875L46.385498046875 654.759765625H313.5810546875ZM282.223388671875 803.94970703125Q278.318359375 794.854736328125 267.818359375 789.2122802734375Q257.318359375 783.56982421875 235.223388671875 787.3798828125L246.223388671875 803.044677734375Q240.12841796875 772.234619140625 229.533447265625 729.5921630859375Q218.9384765625 686.94970703125 205.3909912109375 638.664794921875Q191.843505859375 590.3798828125 176.843505859375 541.094970703125Q161.843505859375 491.81005859375 147.4384765625 447.0726318359375Q133.033447265625 402.335205078125 121.12841796875 367.43017578125H130.9384765625L100.22900390625 336.9609375L37.53076171875 391.765380859375Q48.625732421875 397.240234375 65.3631591796875 403.2625732421875Q82.1005859375 409.284912109375 95.385498046875 412.474853515625L70.9609375 378.094970703125Q82.15087890625 408.474853515625 96.745849609375 452.854736328125Q111.3408203125 497.234619140625 126.435791015625 548.1619873046875Q141.53076171875 599.08935546875 155.53076171875 651.3267822265625Q169.53076171875 703.564208984375 180.935791015625 750.064208984375Q192.3408203125 796.564208984375 199.15087890625 831.184326171875Z'/></svg>
<div class='a' style='left:343px;top:116px;width:2px;height:104px;background:#1f7a1f'></div>
<div class='a' style='left:343px;top:298px;width:2px;height:26px;background:#1f7a1f'></div>
<div class='a' style='left:343px;top:402px;width:2px;height:398px;background:#1f7a1f'></div>
<svg class='a' style='left:353px;top:333px' width='10' height='5'><path d='M0 0H10L5 5Z' fill='#555'/></svg>
<div class='a' style='left:377px;top:376px;width:1px;height:26px;background:#d0d0d0'></div>
<div class='a' style='left:377px;top:428px;width:1px;height:372px;background:#d0d0d0'></div>
<div class='a' style='left:1370px;top:90px;width:16px;height:710px;background:#efeef0'></div>
<svg class='a' style='left:1373px;top:96px' width='10' height='7'><path d='M1 6L5 2L9 6' fill='none' stroke='#4a4a4a' stroke-width='2.2'/></svg>
<svg class='a' style='left:1373px;top:788px' width='10' height='7'><path d='M1 1L5 5L9 1' fill='none' stroke='#4a4a4a' stroke-width='2.2'/></svg>
<div class='a' style='left:1370px;top:154px;width:15px;height:408px;background:#c9c8ca'></div>
<div class='a' style='left:1372px;top:199px;width:12px;height:15px;background:#404040'></div>
<svg class='a' style='left:894px;top:354px' width='8' height='17' viewBox='0 0 8 17'>
<path d='M0 0.8H3M4 0.8H7M0 15.8H3M4 15.8H7' stroke='#000' stroke-width='1.3'/><path d='M3.5 1V15.5' stroke='#000' stroke-width='1.3'/></svg>
<div class='a' style='left:71px;top:799px;width:1315px;height:25px;background:#3e3f41'></div>
<div class='a' style='left:71px;top:799px;width:1315px;height:1px;background:#2a2a2c'></div>
<div class='a' style='left:73px;top:802px;width:23px;height:22px;background:#262626'></div>
<div class='a' style='left:78px;top:806px;width:12px;height:13px;border:1.5px solid #d0d0d0;border-left-width:5px'></div>
<div class='a' style='left:103px;top:802px;width:201px;height:22px;background:#fff'></div>
<svg class='a' style='left:109px;top:804px' width='17' height='17' viewBox='0 0 17 17'>
<circle cx='9.5' cy='6.5' r='5' fill='none' stroke='#777' stroke-width='1.4'/><path d='M6 10L1 15' stroke='#777' stroke-width='1.6'/><path d='M12 14H16L14 16Z' fill='#777'/></svg>
<div class='t' style='left:130.60px;top:804px;font-family:"Liberation Sans";font-size:16.25px;font-weight:400;color:#8a8a8a;'>Type to locate (Ct...</div>
<div class='a' style='left:307px;top:803px;width:1px;height:19px;background:#5a5a5c'></div>
<div class='t' style='left:316.30px;top:805px;font-family:"Liberation Sans";font-size:16.0px;font-weight:400;color:#e2e2e2;'>1</div>
<div class='t' style='left:330.70px;top:806px;font-family:"Liberation Sans";font-size:14.9px;font-weight:400;color:#e2e2e2;'>Issues</div>
<div class='t' style='left:407.20px;top:805px;font-family:"Liberation Sans";font-size:16.0px;font-weight:400;color:#e2e2e2;'>2</div>
<div class='t' style='left:421.60px;top:805px;font-family:"Liberation Sans";font-size:15.3px;font-weight:400;color:#e2e2e2;'>Search Re...</div>
<div class='t' style='left:525.90px;top:805px;font-family:"Liberation Sans";font-size:16.0px;font-weight:400;color:#e2e2e2;'>3</div>
<div class='t' style='left:541.20px;top:805px;font-family:"Liberation Sans";font-size:16.75px;font-weight:400;color:#e2e2e2;'>Applicatio...</div>
<div class='t' style='left:645.10px;top:805px;font-family:"Liberation Sans";font-size:16.0px;font-weight:400;color:#e2e2e2;'>4</div>
<div class='t' style='left:660.00px;top:805px;font-family:"Liberation Sans";font-size:15.8px;font-weight:400;color:#e2e2e2;'>Compile O...</div>
<div class='t' style='left:764.20px;top:805px;font-family:"Liberation Sans";font-size:16.0px;font-weight:400;color:#e2e2e2;'>5</div>
<div class='t' style='left:778.40px;top:805px;font-family:"Liberation Sans";font-size:15.65px;font-weight:400;color:#e2e2e2;'>QML Debu...</div>
<div class='t' style='left:882.70px;top:805px;font-family:"Liberation Sans";font-size:16.0px;font-weight:400;color:#e2e2e2;'>6</div>
<div class='t' style='left:897.70px;top:805px;font-family:"Liberation Sans";font-size:15.95px;font-weight:400;color:#e2e2e2;'>General M...</div>
<div class='t' style='left:1001.70px;top:805px;font-family:"Liberation Sans";font-size:16.0px;font-weight:400;color:#e2e2e2;'>7</div>
<div class='t' style='left:1016.70px;top:805px;font-family:"Liberation Sans";font-size:15.65px;font-weight:400;color:#e2e2e2;'>Version Co...</div>
<div class='t' style='left:1121.10px;top:805px;font-family:"Liberation Sans";font-size:16.0px;font-weight:400;color:#e2e2e2;'>8</div>
<div class='t' style='left:1135.70px;top:805px;font-family:"Liberation Sans";font-size:15.6px;font-weight:400;color:#e2e2e2;'>Test Results</div>
<div class='a' style='left:376px;top:806px;width:16px;height:13px;border-radius:6.5px;background:#8a8a8a'></div>
<div class='t' style='left:379.50px;top:806px;font-family:"Liberation Sans";font-size:14.2px;font-weight:700;color:#fff;'>4</div>
<svg class='a' style='left:1239px;top:805px' width='9' height='14'><path d='M0.5 5.5L4.5 1.5L8.5 5.5M0.5 8.5L4.5 12.5L8.5 8.5' fill='none' stroke='#cfcfcf' stroke-width='1.5'/></svg>
<div class='a' style='left:1313px;top:802px;width:23px;height:22px;background:#262626'></div>
<svg class='a' style='left:1317px;top:805px' width='16' height='12' viewBox='0 0 16 12'><rect x='0.8' y='7' width='13.5' height='4' rx='2' fill='#111' stroke='#d8d8d8' stroke-width='1.2'/><rect x='2' y='8' width='8' height='2' fill='#888'/><path d='M9 3H14L11.5 0.5Z' fill='#d8d8d8'/></svg>
<div class='a' style='left:1348px;top:807px;width:11px;height:11px;border:1.5px solid #d8d8d8;border-right-width:5px;background:#333'></div>
<svg class='a' style='left:1372px;top:810px' width='14' height='14' viewBox='0 0 14 14'><path d='M2 14L14 2M7 14L14 7M11 14L14 11' stroke='#58595b' stroke-width='1'/></svg>
</body></html>
